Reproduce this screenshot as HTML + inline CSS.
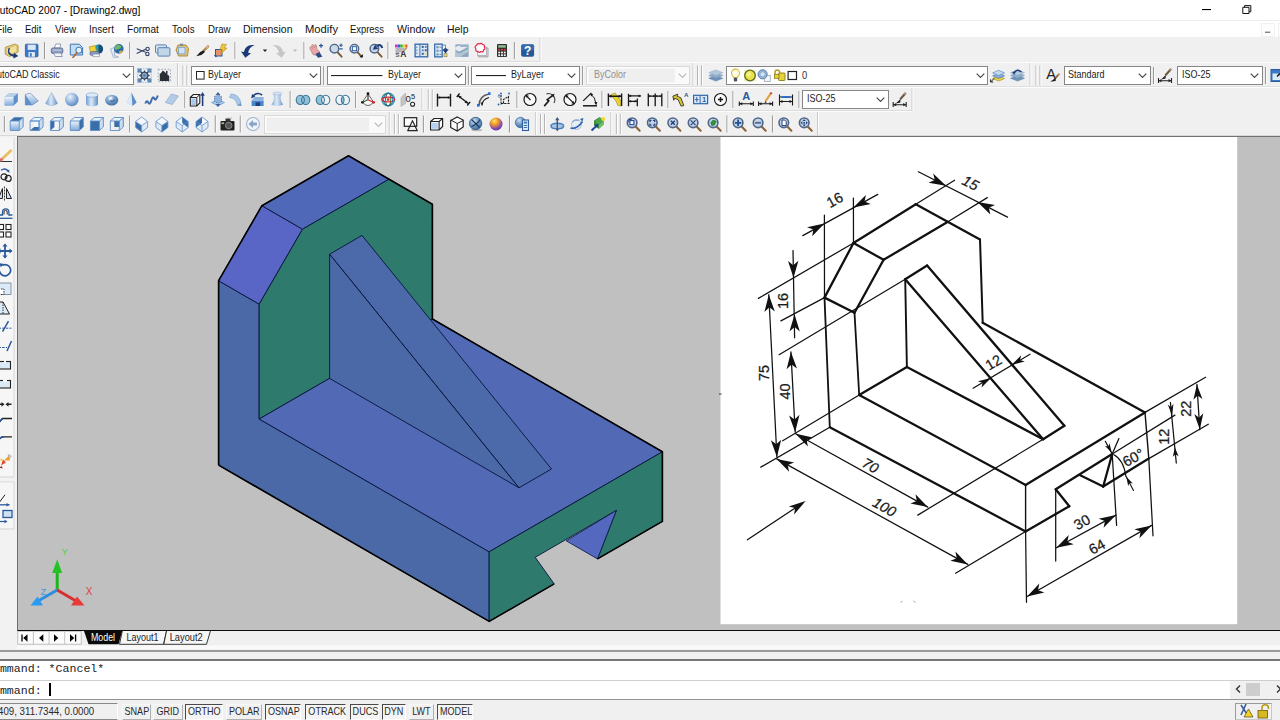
<!DOCTYPE html>
<html><head><meta charset="utf-8"><title>AutoCAD 2007 - [Drawing2.dwg]</title>
<style>
*{box-sizing:border-box;margin:0;padding:0}
html,body{width:1280px;height:720px;overflow:hidden;background:#f0f0f0;font-family:"Liberation Sans",sans-serif;font-size:12px;color:#000}
div,span,svg{position:absolute}
#title{left:0;top:0;width:1280px;height:20px;background:#fff}
#title span{left:-7px;top:5px;font-size:10.2px;line-height:12px;white-space:nowrap;color:#000}
#menu{left:0;top:20px;width:1280px;height:16.5px;z-index:2;background:#fff;border-top:1px solid #ededed}
#menu span{top:2.5px;font-size:10.2px;line-height:12px;white-space:nowrap;color:#111}
#tb{left:0;top:36px;width:1280px;height:101px;background:#f0f0f0}
.dd{height:19px;background:#fff;border:1px solid #868686;font-size:10.2px;line-height:16px;white-space:nowrap;overflow:hidden}
.dd.dis span{color:#909090}
.dd.dis{background:#efefef;border-color:#d9d9d9;box-shadow:inset 0 0 0 1.5px #fdfdfd}
.dd span{top:0;transform:scaleX(0.88);transform-origin:left center;color:#1c1c1c}
#canvas{left:16.5px;top:136.3px;width:1263.5px;height:495.2px;background:#c0c0c0;border-left:1.5px solid #6e6e6e;border-top:1.5px solid #727272;border-bottom:1.7px solid #0c0c0c}
#left{left:0;top:137px;width:17px;height:512px;background:#f2f2f2}
#tabs{left:17px;top:631px;width:1263px;height:18px;background:#f0f0f0}
#cmd{left:0;top:650px;width:1280px;height:50px;background:#fff;font-family:"Liberation Mono",monospace;font-size:11.6px}
#cmd span{white-space:nowrap;color:#222}
#status{left:0;top:699.2px;width:1280px;height:20.8px;background:#f0f0f0;font-size:10.2px;border-top:1.6px solid #939393}
#status i{display:inline-block;font-style:normal;transform:scaleX(0.89);transform-origin:center;white-space:nowrap}
#status span{top:3.5px;height:16.5px;line-height:14px;white-space:nowrap;text-align:center;color:#2a2a2a;overflow:visible}
#status span.on{border:1px solid #4a4a4a;border-right-color:#fff;border-bottom-color:#fff;background:#f4f4f4;line-height:14.6px}
#status span.off{border:1px solid #f8f8f8;border-right-color:#b0b0b0;border-bottom-color:#b0b0b0}
</style></head><body>
<div id="title"><span>AutoCAD 2007 - [Drawing2.dwg]</span>
<svg width="80" height="20" style="left:1200px;top:0" viewBox="1200 0 80 20"><rect x="1202" y="9" width="9" height="1.1" fill="#000"/><path d="M1242.8 7.3h6.2v6.2h-6.2z M1244.6 7.3v-1.7h6.2v6.2h-1.8" fill="none" stroke="#111" stroke-width="1"/></svg></div>
<div id="menu"><span style="left:-4px;transform:scaleX(1);transform-origin:left center">File</span><span style="left:25.3px;transform:scaleX(0.926);transform-origin:left center">Edit</span><span style="left:54.8px;transform:scaleX(0.968);transform-origin:left center">View</span><span style="left:88.5px;transform:scaleX(0.98);transform-origin:left center">Insert</span><span style="left:126.6px;transform:scaleX(0.988);transform-origin:left center">Format</span><span style="left:172.1px;transform:scaleX(0.95);transform-origin:left center">Tools</span><span style="left:207.8px;transform:scaleX(0.945);transform-origin:left center">Draw</span><span style="left:243px;transform:scaleX(1.029);transform-origin:left center">Dimension</span><span style="left:305px;transform:scaleX(1.1);transform-origin:left center">Modify</span><span style="left:350px;transform:scaleX(0.924);transform-origin:left center">Express</span><span style="left:396.5px;transform:scaleX(1.05);transform-origin:left center">Window</span><span style="left:446.5px;transform:scaleX(1.024);transform-origin:left center">Help</span><svg width="30" height="16" style="left:1255px;top:1px"><rect x="6.5" y="1.5" width="13" height="13" fill="#fdfdfd" stroke="#f0f0f0"/><rect x="10" y="9.6" width="5.2" height="1.3" fill="#777"/><rect x="23.5" y="1.5" width="13" height="13" fill="#fdfdfd" stroke="#f0f0f0"/></svg></div>
<div id="tb"><div class="dd " style="left:-12px;top:30px;width:146px"><span style="left:1.5px">AutoCAD Classic</span><svg width="9" height="6" style="right:2.5px;top:6.2px" viewBox="0 0 9 6"><path d="M0.7 0.7 L4.5 4.4 L8.3 0.7" fill="none" stroke="#444" stroke-width="1.15"/></svg></div><div class="dd " style="left:190.5px;top:30px;width:130.5px"><svg width="12" height="12" style="left:4.2px;top:4.2px"><rect x="0.5" y="0.5" width="7.6" height="7.6" fill="#fff" stroke="#222"/></svg><span style="left:16.9px">ByLayer</span><svg width="9" height="6" style="right:2.5px;top:6.2px" viewBox="0 0 9 6"><path d="M0.7 0.7 L4.5 4.4 L8.3 0.7" fill="none" stroke="#444" stroke-width="1.15"/></svg></div><div class="dd " style="left:327px;top:30px;width:139px"><svg width="60" height="3" style="left:3px;top:7.5px"><rect width="51.5" height="1.1" fill="#222"/></svg><span style="left:60px">ByLayer</span><svg width="9" height="6" style="right:2.5px;top:6.2px" viewBox="0 0 9 6"><path d="M0.7 0.7 L4.5 4.4 L8.3 0.7" fill="none" stroke="#444" stroke-width="1.15"/></svg></div><div class="dd " style="left:471.3px;top:30px;width:108.69999999999999px"><svg width="60" height="3" style="left:4px;top:7.5px"><rect width="30" height="1.1" fill="#222"/></svg><span style="left:38.5px">ByLayer</span><svg width="9" height="6" style="right:2.5px;top:6.2px" viewBox="0 0 9 6"><path d="M0.7 0.7 L4.5 4.4 L8.3 0.7" fill="none" stroke="#444" stroke-width="1.15"/></svg></div><div class="dd dis" style="left:586px;top:30px;width:104px"><div style="left:88px;top:0;width:16px;height:17px;background:#fafafa"></div><span style="left:7px">ByColor</span><svg width="9" height="6" style="right:2.5px;top:6.2px" viewBox="0 0 9 6"><path d="M0.7 0.7 L4.5 4.4 L8.3 0.7" fill="none" stroke="#b8b8b8" stroke-width="1.15"/></svg></div><div class="dd " style="left:726px;top:30px;width:262px"><span style="left:74.6px"><b style="font-weight:normal;font-size:10.6px;color:#333">0</b></span><svg width="9" height="6" style="right:2.5px;top:6.2px" viewBox="0 0 9 6"><path d="M0.7 0.7 L4.5 4.4 L8.3 0.7" fill="none" stroke="#444" stroke-width="1.15"/></svg></div><div class="dd " style="left:1064px;top:30px;width:86.5px"><span style="left:3px">Standard</span><svg width="9" height="6" style="right:2.5px;top:6.2px" viewBox="0 0 9 6"><path d="M0.7 0.7 L4.5 4.4 L8.3 0.7" fill="none" stroke="#444" stroke-width="1.15"/></svg></div><div class="dd " style="left:1176.5px;top:30px;width:86.0px"><span style="left:4px">ISO-25</span><svg width="9" height="6" style="right:2.5px;top:6.2px" viewBox="0 0 9 6"><path d="M0.7 0.7 L4.5 4.4 L8.3 0.7" fill="none" stroke="#444" stroke-width="1.15"/></svg></div><div class="dd " style="left:802px;top:54px;width:86.5px"><span style="left:3.6px">ISO-25</span><svg width="9" height="6" style="right:2.5px;top:6.2px" viewBox="0 0 9 6"><path d="M0.7 0.7 L4.5 4.4 L8.3 0.7" fill="none" stroke="#444" stroke-width="1.15"/></svg></div><div class="dd dis" style="left:264px;top:79px;width:122px"><div style="left:104px;top:0;width:17px;height:17px;background:#fafafa"></div><span style="left:5px"></span><svg width="9" height="6" style="right:2.5px;top:6.2px" viewBox="0 0 9 6"><path d="M0.7 0.7 L4.5 4.4 L8.3 0.7" fill="none" stroke="#b8b8b8" stroke-width="1.15"/></svg></div><svg width="1280" height="101" viewBox="0 36 1280 101" style="left:0;top:0"><defs>
<linearGradient id="gs" x1="0" y1="0" x2="1" y2="0"><stop offset="0" stop-color="#6f9fd4"/><stop offset="0.45" stop-color="#dce9f6"/><stop offset="1" stop-color="#5f8fc8"/></linearGradient>
<linearGradient id="gv" x1="0" y1="0" x2="0" y2="1"><stop offset="0" stop-color="#eef4fb"/><stop offset="1" stop-color="#7fa8d8"/></linearGradient>
<radialGradient id="gr" cx="0.38" cy="0.32" r="0.7"><stop offset="0" stop-color="#eaf2fb"/><stop offset="0.6" stop-color="#8fb2dc"/><stop offset="1" stop-color="#5f88c0"/></radialGradient>
<radialGradient id="go" cx="0.38" cy="0.28" r="0.8"><stop offset="0" stop-color="#ffe468"/><stop offset="0.35" stop-color="#f09a22"/><stop offset="0.72" stop-color="#8a4ab0"/><stop offset="1" stop-color="#4a2a98"/></radialGradient>
<radialGradient id="gr2" cx="0.38" cy="0.3" r="0.75"><stop offset="0" stop-color="#cfe0f0"/><stop offset="0.5" stop-color="#6f9ac8"/><stop offset="1" stop-color="#3f6a9c"/></radialGradient>
</defs><rect x="0" y="61" width="540" height="1" fill="#dcdcdc"/><rect x="0" y="62" width="1280" height="1" fill="#fcfcfc"/><rect x="0" y="86" width="1280" height="1" fill="#e0e0e0"/><rect x="0" y="87" width="1280" height="1" fill="#fcfcfc"/><rect x="0" y="110" width="912" height="1" fill="#dcdcdc"/><rect x="0" y="111" width="912" height="1" fill="#fcfcfc"/><rect x="0" y="135" width="1280" height="1" fill="#d8d8d8"/><g transform="translate(11.7 50.5)"><path d="M-6.5 -3.2l9.5-3.3l3.5 1.5v6.5l-8.5 4.7l-4.5-2.5z" fill="#dcc472" stroke="#a88e3c" stroke-width="0.7"/><path d="M-5 -1.2l9.5-3.5v5.5l-8 4.3z" fill="#f0e09a"/><path d="M-1.5 -2.2q-3 5 3.6 6.4v-1.9l4.6 3.3l-5 2.4v-1.8q-7.5-1.4-5-8.4z" fill="#1f3a70"/></g><g transform="translate(31.7 50.5)"><rect x="-6.3" y="-6.3" width="12.6" height="12.6" rx="1" fill="#3c78c4" stroke="#2a5a9c" stroke-width="0.8"/><rect x="-4" y="-5.8" width="8" height="5.2" fill="#d9e6f5"/><rect x="-3.2" y="1.6" width="6.4" height="4.6" fill="#e8eef6"/><rect x="-1.8" y="2.6" width="1.8" height="3.6" fill="#3c78c4"/></g><g transform="translate(57.3 50.5)"><path d="M-3 -2.5l1.5-4h5l-1 4z" fill="#fff" stroke="#7888aa" stroke-width="0.8"/><rect x="-6" y="-2.5" width="11.5" height="5.5" rx="1.5" fill="#8c9cc0" stroke="#56648c" stroke-width="0.8"/><path d="M-3.5 2.5h7l1.5 3.5h-7z" fill="#f4f6fa" stroke="#7888aa" stroke-width="0.8"/><rect x="-4.5" y="-1" width="8.5" height="1.2" fill="#c8d2e6"/></g><g transform="translate(76.6 50.5)"><path d="M-6.3 -6.3h9l3.3 3.3v7.5h-12.3z" fill="#c4dcf0" stroke="#3f76b4" stroke-width="1"/><circle cx="2.3" cy="-0.3" r="3" fill="#e4f0fa" stroke="#4a82c0" stroke-width="1.1"/><path d="M0.3 2.2l-3.8 4.6" stroke="#b06a3a" stroke-width="1.8" stroke-linecap="round"/></g><g transform="translate(96 50.5)"><circle cx="2.5" cy="-1.5" r="4.6" fill="#2a9ab0"/><path d="M2.5 -6a4.6 4.6 0 0 1 0 9.2z" fill="#1c4a78"/><rect x="-5.8" y="-5" width="6" height="6" fill="#f0d23c" stroke="#b89a20" stroke-width="0.7" transform="rotate(-12)"/><rect x="-6" y="1.2" width="9" height="3.6" rx="1.2" fill="#8c9cc0" stroke="#56648c" stroke-width="0.7"/><rect x="-3" y="3.6" width="6.4" height="2.6" fill="#f4f6fa" stroke="#8090b0" stroke-width="0.6"/></g><g transform="translate(117 50.5)"><path d="M-6.5 -1.5l4-1.5v8l4 1.5l-5 0.5z" fill="#e6ecf4" stroke="#98a8c4" stroke-width="0.8"/><circle cx="1.8" cy="-1.6" r="4.8" fill="#2c6aa8"/><path d="M-1.5 -4.5q3-2.5 6 0.5q-1 3-3.5 2.5q-2.5 2-3.5-0.5z" fill="#6ab86a"/><path d="M2 1q2-1.5 4-0.5q-1 2.5-3.5 2.7z" fill="#d8a83c"/></g><g transform="translate(143 50.5)"><path d="M-6.3 -1.8l9 3.6M-6.3 3l9.4-4.6" stroke="#34446c" stroke-width="1.15" fill="none"/><circle cx="4.6" cy="-1.6" r="1.7" fill="none" stroke="#34446c" stroke-width="1.1"/><circle cx="4.4" cy="3.4" r="1.7" fill="none" stroke="#34446c" stroke-width="1.1"/></g><g transform="translate(162.5 50.5)"><rect x="-7" y="-5.6" width="11" height="8" rx="1" fill="#d4e2ee" stroke="#5a82b4" stroke-width="1"/><rect x="-4.6" y="-2.8" width="12" height="8.4" rx="1" fill="#c2d6e8" stroke="#5a82b4" stroke-width="1"/></g><g transform="translate(182 50.5)"><path d="M-4 -5.5h8l2.5 3.5l-1 7.5h-9l-2.5-6z" fill="#e2c27a" stroke="#a8842c" stroke-width="0.9"/><rect x="-2.2" y="-6.8" width="3.4" height="2.2" fill="#8a8a8a"/><rect x="-3.6" y="-3.2" width="6.6" height="6.6" fill="#cfe2f4" stroke="#6a9acc" stroke-width="0.7"/></g><g transform="translate(202 50.5)"><path d="M6 -4.2l-5.2 5.4" stroke="#b48a56" stroke-width="2.4" stroke-linecap="round"/><path d="M6.2 -4.6l-2 2.2" stroke="#e0c08a" stroke-width="1.2"/><path d="M1.6 0l-3.4 1.6l-4 4.2l5.2-1.2l3.6-3.2z" fill="#1c1c1c"/></g><g transform="translate(221 50.5)"><rect x="-5.5" y="-1" width="6.5" height="6.5" fill="#e8926a" stroke="#2a5a9c" stroke-width="1"/><path d="M1 -6.5l4.5 0.5l-2.5 3.5h3l-6 6l1.5-4.5h-2.5z" fill="#f0c838" stroke="#b08a18" stroke-width="0.6"/><path d="M-6.5 4.5l2 2" stroke="#2a5a9c" stroke-width="1.4"/></g><g transform="translate(249 50.5)"><path d="M5.6 -5.2Q-3.5 -6.8 -5.4 2.2L-0.8 2.8Q-0.5 -3 5.6 -5.2z" fill="#1c3a78"/><path d="M-8 1.0L2 2.8L-3.6 7.2z" fill="#1c3a78"/></g><g transform="translate(278 50.5)"><path d="M-5.6 -5.2Q3.5 -6.8 5.4 2.2L0.8 2.8Q0.5 -3 -5.6 -5.2z" fill="#c6c6c6"/><path d="M8 1.0L-2 2.8L3.6 7.2z" fill="#c6c6c6"/></g><g transform="translate(316 50.5)"><path transform="rotate(-22 -1 0)" d="M-5 -3.5q0-2 1.6-1.6l0.8 2.4l0.4-3.4q1.4-1 1.8 0.4l0.2 2.8l1.2-2.4q1.4-0.2 1.2 1.2l-1 3.6l1.6 3l-3.4 3.4l-3.8-3z" fill="#e8a6a6" stroke="#b87878" stroke-width="0.6"/><path d="M-0.5 3.5l4 -2l2.8 4.8l-4.3 1z" fill="#2a4a8c"/><path d="M5 -6.8v4M3 -4.8h4" stroke="#2a5a9c" stroke-width="1.3"/></g><g transform="translate(336 50.5)"><path d="M1 1.2l4.6 5" stroke="#7a5a30" stroke-width="1.9" stroke-linecap="round"/><circle cx="-1.6" cy="-1.8" r="4.3" fill="#ccdae8" stroke="#4f6688" stroke-width="1.4"/><path d="M5 -7v3.4M3.3 -5.3h3.4M3.3 -1.6h3.4" stroke="#2a5a9c" stroke-width="1.1"/></g><g transform="translate(356 50.5)"><path d="M1 1.2l4.6 5" stroke="#7a5a30" stroke-width="1.9" stroke-linecap="round"/><circle cx="-1.6" cy="-1.8" r="4.3" fill="#ccdae8" stroke="#4f6688" stroke-width="1.4"/><rect x="-3.6" y="-3.8" width="4" height="4" fill="#fff" stroke="#2a5a9c" stroke-width="0.9"/><path d="M6.8 3.5v3.3h-3.3z" fill="#111"/></g><g transform="translate(376 50.5)"><path d="M1 1.2l4.6 5" stroke="#7a5a30" stroke-width="1.9" stroke-linecap="round"/><circle cx="-1.6" cy="-1.8" r="4.3" fill="#c8d6e6" stroke="#4f6688" stroke-width="1.4"/><path d="M6.2 -2.6Q5.2 -6.8 0.6 -4.6" stroke="#1f3f7a" stroke-width="2.2" fill="none"/><path d="M-3.2 -0.8L2.2 -1.6L-1 -5.9z" fill="#1f3f7a"/></g><g transform="translate(401 50.5)"><rect x="-6" y="-6" width="2.6" height="3" fill="#c83cb4"/><rect x="-3.4" y="-6" width="2.6" height="3" fill="#3c5ad2"/><rect x="-0.8" y="-6" width="2.6" height="3" fill="#3cb43c"/><rect x="1.8" y="-6" width="2.6" height="3" fill="#e6d23c"/><rect x="4.4" y="-6" width="2" height="3" fill="#e05a28"/><path d="M-5.5 -1.5h9M-5.5 0.5h7M-5.5 2.5h4" stroke="#7a7a8a" stroke-width="1.1"/><path d="M6 -3l-6 6" stroke="#c8906a" stroke-width="1.6"/><text x="2.2" y="6.8" font-family="Liberation Sans, sans-serif" font-size="8.5" font-weight="bold" fill="#333" text-anchor="middle">A</text><text x="-3.6" y="6.8" font-family="Liberation Sans, sans-serif" font-size="6" font-weight="bold" fill="#555" text-anchor="middle">S</text></g><g transform="translate(421.4 50.5)"><rect x="-6.3" y="-6.3" width="12.6" height="12.6" fill="#dce9f6" stroke="#2f66aa" stroke-width="1.3"/><path d="M-1.5 -6v12" stroke="#2f66aa" stroke-width="0.9"/><path d="M-4.6 -4v8" stroke="#4a7ab8" stroke-width="1" stroke-dasharray="1.4 1.6"/><rect x="0.3" y="-4.6" width="2" height="2" fill="#3a5a8c"/><rect x="3.4" y="-4.6" width="2" height="2" fill="#6a8ab8"/><rect x="0.3" y="-1.2" width="2" height="2" fill="#6a8ab8"/><rect x="3.4" y="-1.2" width="2" height="2" fill="#3a5a8c"/><rect x="0.3" y="2.3" width="2" height="2" fill="#3a5a8c"/><rect x="3.4" y="2.3" width="2" height="2" fill="#e8d870"/></g><g transform="translate(441 50.5)"><path d="M-6.3 -6.3h7.5v12.6h-7.5z" fill="#dce9f6" stroke="#2f66aa" stroke-width="1.2"/><rect x="-4.6" y="-4.4" width="2.2" height="2.2" fill="#7a94b8"/><rect x="-4.6" y="-0.8" width="2.2" height="2.2" fill="#7a94b8"/><rect x="-4.6" y="2.8" width="2.2" height="2.2" fill="#7a94b8"/><path d="M-1.5 -3.3h2M-1.5 0.3h2M-1.5 3.9h2" stroke="#5a7aa8" stroke-width="0.9"/><path d="M1.5 -5.5h3v3.5" fill="none" stroke="#6a8ab8" stroke-width="1"/><path d="M3.5 -2.5l3.2 4.2h-2v1h-2.4v-1h-2z" fill="#1f3f7a" transform="rotate(180 4 0.2)"/><rect x="3" y="3.2" width="3" height="3" fill="#e8d870" stroke="#7a7a5a" stroke-width="0.6"/></g><g transform="translate(462 50.5)"><rect x="-6.6" y="-6" width="13.2" height="12.4" fill="#8ea6bc"/><path d="M-6.6 -3.5l6-2.5h7.2v2l-9 5l-4.2-1.5z" fill="#e4ecf2"/><path d="M-6.6 1.5l4.5 1.5l8.7-5v3l-8.7 5.4h-4.5z" fill="#b4c6d6"/><path d="M-6.6 -6h13.2v2.5h-7z" fill="#9ab4cc"/></g><g transform="translate(481.5 50.5)"><path d="M-3 -2.5h9.5v8.8h-9.5z" fill="#e8e8ec" stroke="#8a8a92" stroke-width="0.8"/><path d="M-4 -3.5h9v8.5h-9z" fill="#f4f4f6" stroke="#9a9aa2" stroke-width="0.7"/><path d="M-5.5 -1.5q-2-2.5 0.5-3.5q0.5-2.5 3-1.5q2-1.5 3 0.5q2.5 0 1.8 2.5q1.5 2-0.8 3q0 2.5-2.5 1.5q-2 1.8-3.2-0.2q-2.8 0.2-1.8-2.3z" fill="#fff" stroke="#e02848" stroke-width="1.2"/></g><g transform="translate(502 50.5)"><rect x="-5" y="-6.6" width="10" height="13.2" rx="1" fill="#2c2c2c"/><rect x="-3.8" y="-5.4" width="7.6" height="2.6" fill="#8ab88a"/><rect x="-3.8" y="-1.6" width="1.9" height="1.8" fill="#d83c3c"/><rect x="-1.0" y="-1.6" width="1.9" height="1.8" fill="#d83c3c"/><rect x="1.7999999999999998" y="-1.6" width="1.9" height="1.8" fill="#d83c3c"/><rect x="-3.8" y="1.1" width="1.9" height="1.8" fill="#f0f0f0"/><rect x="-1.0" y="1.1" width="1.9" height="1.8" fill="#f0f0f0"/><rect x="1.7999999999999998" y="1.1" width="1.9" height="1.8" fill="#f0f0f0"/><rect x="-3.8" y="3.8000000000000003" width="1.9" height="1.8" fill="#f0f0f0"/><rect x="-1.0" y="3.8000000000000003" width="1.9" height="1.8" fill="#f0f0f0"/><rect x="1.7999999999999998" y="3.8000000000000003" width="1.9" height="1.8" fill="#f0f0f0"/></g><g transform="translate(527.6 50.5)"><rect x="-6.5" y="-6.3" width="13" height="12.6" rx="2" fill="#275796"/><rect x="-6.5" y="-6.3" width="13" height="6" rx="2" fill="#3f78bc" opacity="0.6"/><text x="0" y="4.6" font-family="Liberation Sans, sans-serif" font-size="12" font-weight="bold" fill="#fff" text-anchor="middle">?</text></g><g transform="translate(265 50.5)"><path d="M-2.2 -1h4.4l-2.2 2.4z" fill="#222"/></g><g transform="translate(295 50.5)"><path d="M-2.2 -1h4.4l-2.2 2.4z" fill="#bdbdbd"/></g><rect x="43.95" y="42.0" width="1.1" height="17" fill="#999"/><rect x="45.05" y="42.0" width="0.8" height="17" fill="#fcfcfc"/><rect x="129.14999999999998" y="42.0" width="1.1" height="17" fill="#999"/><rect x="130.25" y="42.0" width="0.8" height="17" fill="#fcfcfc"/><rect x="234.45" y="42.0" width="1.1" height="17" fill="#999"/><rect x="235.55" y="42.0" width="0.8" height="17" fill="#fcfcfc"/><rect x="303.45" y="42.0" width="1.1" height="17" fill="#999"/><rect x="304.55" y="42.0" width="0.8" height="17" fill="#fcfcfc"/><rect x="387.45" y="42.0" width="1.1" height="17" fill="#999"/><rect x="388.55" y="42.0" width="0.8" height="17" fill="#fcfcfc"/><rect x="513.85" y="42.0" width="1.1" height="17" fill="#999"/><rect x="514.9499999999999" y="42.0" width="0.8" height="17" fill="#fcfcfc"/><rect x="539.5" y="38" width="1" height="23" fill="#c9c9c9"/><rect x="540.5" y="38" width="1" height="23" fill="#fbfbfb"/><rect x="323.15" y="66.0" width="1.1" height="19" fill="#999"/><rect x="324.25" y="66.0" width="0.8" height="19" fill="#fcfcfc"/><rect x="467.84999999999997" y="66.0" width="1.1" height="19" fill="#999"/><rect x="468.95" y="66.0" width="0.8" height="19" fill="#fcfcfc"/><rect x="582.0500000000001" y="66.0" width="1.1" height="19" fill="#999"/><rect x="583.15" y="66.0" width="0.8" height="19" fill="#fcfcfc"/><g transform="translate(144.5 75.5)"><rect x="-8" y="-8.2" width="16" height="16.4" fill="#e8f1fa"/><rect x="-6.9" y="-6.9" width="4" height="4" fill="#5f86ae"/><rect x="2.9" y="-6.9" width="4" height="4" fill="#5f86ae"/><rect x="-6.9" y="2.9" width="4" height="4" fill="#5f86ae"/><rect x="2.9" y="2.9" width="4" height="4" fill="#5f86ae"/><rect x="-6.9" y="-6.9" width="13.8" height="13.8" fill="none" stroke="#7f9ebe" stroke-width="0.6" stroke-dasharray="1.5 1.2"/><polygon points="0.00,-5.60 1.38,-3.33 3.96,-3.96 3.33,-1.38 5.60,-0.00 3.33,1.38 3.96,3.96 1.38,3.33 0.00,5.60 -1.38,3.33 -3.96,3.96 -3.33,1.38 -5.60,0.00 -3.33,-1.38 -3.96,-3.96 -1.38,-3.33" fill="#3c4652"/><circle r="2.7" fill="#86a2c6"/><circle r="1.3" fill="#5a7eae"/></g><g transform="translate(164.4 75.5)"><rect x="-6.2" y="-6.2" width="12.4" height="12.4" fill="none" stroke="#8896a6" stroke-width="0.8" stroke-dasharray="1.6 1.6"/><path d="M-4.6 5.4v-6.6l3.2-3.8l6.2 5.4v5z" fill="#2a2e36"/><rect x="1.6" y="-4.6" width="1.5" height="3" fill="#2a2e36"/></g><rect x="177.0" y="63" width="1" height="23" fill="#c9c9c9"/><rect x="178.0" y="63" width="1" height="23" fill="#fbfbfb"/><rect x="182.5" y="65.5" width="1" height="20" fill="#b4b4b4"/><rect x="183.5" y="65.5" width="1" height="20" fill="#fff"/><rect x="186.5" y="65.5" width="1" height="20" fill="#b4b4b4"/><rect x="187.5" y="65.5" width="1" height="20" fill="#fff"/><rect x="692.5" y="63" width="1" height="23" fill="#c9c9c9"/><rect x="693.5" y="63" width="1" height="23" fill="#fbfbfb"/><rect x="697.0" y="65.5" width="1" height="20" fill="#b4b4b4"/><rect x="698.0" y="65.5" width="1" height="20" fill="#fff"/><rect x="701.0" y="65.5" width="1" height="20" fill="#b4b4b4"/><rect x="702.0" y="65.5" width="1" height="20" fill="#fff"/><g transform="translate(715.8 75.5)"><path d="M-7 2.8l7-2.8l7 2.8l-7 2.8z" fill="#6f93b8" stroke="#5a7ea4" stroke-width="0.5"/><path d="M-7 0l7-2.8l7 2.8l-7 2.8z" fill="#8dacc8" stroke="#6a8eb4" stroke-width="0.5"/><path d="M-7 -2.8l7-2.8l7 2.8l-7 2.8z" fill="#b4c8dc" stroke="#86a4c2" stroke-width="0.5"/></g><g transform="translate(735.5 75.5)"><path d="M-1.8 2q-2.4-2.4-2.2-4.4a4 4 0 0 1 8 0q0.2 2-2.2 4.4z" fill="#fffde8" stroke="#d4bc30" stroke-width="1.1"/><rect x="-1.7" y="2.3" width="3.4" height="3.6" rx="0.8" fill="#4a5266"/></g><g transform="translate(750 75.5)"><rect x="-5.8" y="-5.8" width="11.6" height="11.6" fill="#e6ee9a" opacity="0.7"/><circle r="5.3" fill="#ece244" stroke="#5a6a2a" stroke-width="1.3"/><circle cx="-1.2" cy="-1.2" r="2.2" fill="#f6f08a"/></g><g transform="translate(763.8 75.5)"><rect x="0.5" y="0" width="6" height="6" fill="#f2f4f8" stroke="#9aa6b8" stroke-width="0.8"/><circle cx="-1.2" cy="-1.2" r="4.6" fill="#8fb2d4" stroke="#5a7a9e" stroke-width="0.9"/><circle cx="-1.2" cy="-1.2" r="2" fill="#d4e4f2"/></g><g transform="translate(780 75.5)"><path d="M-5 -1v-2.2a2.3 2.3 0 0 1 4.6 0v1" fill="none" stroke="#b8a020" stroke-width="1.5"/><rect x="-1.5" y="-2.5" width="6.5" height="7.5" rx="0.8" fill="#e6d23c" stroke="#8a7a18" stroke-width="0.9"/><rect x="-5.5" y="-1.2" width="4.5" height="4" fill="#e6d23c" stroke="#8a7a18" stroke-width="0.8"/></g><g transform="translate(792.3 75.5)"><rect x="-4.2" y="-4" width="8.4" height="8" fill="#fff" stroke="#222" stroke-width="1.2"/></g><g transform="translate(997.6 75.5)"><path d="M-5 3l6-2.6l6 2.6l-6 2.6z" fill="#e6d23c" stroke="#9a8a20" stroke-width="0.6"/><path d="M-5 0.3l6-2.6l6 2.6l-6 2.6z" fill="#8ab0dc" stroke="#3f6fae" stroke-width="0.6"/><path d="M-5 -2.6l6-2.6l6 2.6l-6 2.6z" fill="#c4daf0" stroke="#4f7fbe" stroke-width="0.6"/><path d="M-7 6.5l3.5-3.5M-7 6.5v-2.6M-7 6.5h2.6" stroke="#222" stroke-width="1" fill="none"/></g><g transform="translate(1017.5 75.5)"><path d="M-7 2.8l7-2.8l7 2.8l-7 2.8z" fill="#6f93b8" stroke="#5a7ea4" stroke-width="0.5"/><path d="M-7 0l7-2.8l7 2.8l-7 2.8z" fill="#8dacc8" stroke="#6a8eb4" stroke-width="0.5"/><path d="M-7 -2.8l7-2.8l7 2.8l-7 2.8z" fill="#b4c8dc" stroke="#86a4c2" stroke-width="0.5"/><path d="M-3.5 -2.5q3-5 7.5-1" fill="none" stroke="#1f3f7a" stroke-width="1.5"/><path d="M-5.5 -3.5l3.6-0.4l-1.2 3.2z" fill="#1f3f7a"/></g><rect x="1029.5" y="63" width="1" height="23" fill="#c9c9c9"/><rect x="1030.5" y="63" width="1" height="23" fill="#fbfbfb"/><rect x="1035.5" y="65.5" width="1" height="20" fill="#b4b4b4"/><rect x="1036.5" y="65.5" width="1" height="20" fill="#fff"/><rect x="1039.5" y="65.5" width="1" height="20" fill="#b4b4b4"/><rect x="1040.5" y="65.5" width="1" height="20" fill="#fff"/><g transform="translate(1052.6 75.5)"><text x="-1.6" y="3.6" font-family="Liberation Sans, sans-serif" font-size="14.5" fill="#222" text-anchor="middle">A</text><path d="M6.6 -1.6l-3.8 4.2" stroke="#8a6a48" stroke-width="2"/><path d="M6.8 -1.9l-1.4 1.6" stroke="#c8a070" stroke-width="1.5"/><path d="M3.2 2.2l-5.6 4l5.4-0.8z" fill="#1c1c1c"/></g><rect x="1152.95" y="67.0" width="1.1" height="17" fill="#999"/><rect x="1154.05" y="67.0" width="0.8" height="17" fill="#fcfcfc"/><g transform="translate(1165 75.5)"><path d="M-7 5.2h14M-6.5 2.5v5M6.5 2.5v5" stroke="#222" stroke-width="1.1" fill="none"/><path d="M-6.5 5.2l3-1.6v3.2zM6.5 5.2l-3-1.6v3.2z" fill="#222"/><path d="M6 -6.5l-5.6 6.4" stroke="#6a5844" stroke-width="2.2"/><path d="M6.2 -6.8l-1.6 1.8" stroke="#b89a70" stroke-width="1.6"/><path d="M0.8 -0.4l-4.8 4.4l4.6-1z" fill="#1c1c1c"/></g><rect x="1264.95" y="67.0" width="1.1" height="17" fill="#999"/><rect x="1266.05" y="67.0" width="0.8" height="17" fill="#fcfcfc"/><g transform="translate(1277 75.5)"><rect x="-6" y="-6" width="12" height="12" fill="#3c78c4" stroke="#2a5a9c" stroke-width="1"/><rect x="-4.5" y="-2" width="9" height="6.5" fill="#dce9f6"/><path d="M6 -5l-6 6" stroke="#222" stroke-width="1.6"/></g><g transform="translate(11.2 99.5)"><path d="M-6.5 -2.5l4-3.5h9v8l-4 4h-9z" fill="#8fb2dc"/><path d="M-6.5 -2.5l4-3.5h9l-4 3.5z" fill="#b8d0ea"/><rect x="-6.5" y="-2.5" width="9" height="8.5" fill="url(#gv)"/><path d="M2.5 -2.5l4-3.5v8l-4 4z" fill="#5f8fc8"/></g><g transform="translate(31.8 99.5)"><path d="M-6.5 -5v10.5h7l6-4l-8-8z" fill="#a9c8ea"/><path d="M-6.5 -5v10.5h7z" fill="#5f8fc8"/><path d="M-6.5 -5l5-1.5l8 8l-6 4z" fill="url(#gv)"/><path d="M-6.5 -5l5-1.5l8 8l-6 4h-7z" fill="none" stroke="#5f86b8" stroke-width="0.6"/></g><g transform="translate(51.6 99.5)"><path d="M0 -7l6 11q-6 4-12 0z" fill="url(#gs)" stroke="#7fa0c8" stroke-width="0.5"/></g><g transform="translate(71.8 99.5)"><circle r="6.8" fill="url(#gr)"/></g><g transform="translate(92 99.5)"><path d="M-6 -4.5v9a6 2.3 0 0 0 12 0v-9z" fill="url(#gs)"/><ellipse cx="0" cy="-4.5" rx="6" ry="2.2" fill="#dce9f6" stroke="#7fa0c8" stroke-width="0.6"/></g><g transform="translate(111.7 99.5)"><ellipse cx="0" cy="0.6" rx="6.6" ry="5.4" fill="url(#gr2)"/><path d="M-2.6 -0.6q1.2-2.6 4.2-1.4q-2.4 0.4-2 2.8q-1.6 0.6-2.2-1.4z" fill="#eef4fa"/><path d="M-1.8 1.2q2.4 1.8 5-0.8" stroke="#2f5a8e" stroke-width="1" fill="none"/></g><g transform="translate(131.5 99.5)"><path d="M0 -7l5 10l-4 3.5l-6-3.5z" fill="#a9c8ea"/><path d="M0 -7l1 13.5l-6-3.5z" fill="#dce9f6"/><path d="M0 -7l5 10l-4 3.5z" fill="#5f8fc8"/></g><g transform="translate(151.3 99.5)"><path d="M-6 4q1.5-4 3 -1t3-2t3-2t3.5-3" fill="none" stroke="#3f6fae" stroke-width="2"/></g><g transform="translate(171.9 99.5)"><path d="M-6.5 3l6-8.5l7 2l-6 8.5z" fill="#b4cce8" stroke="#8aa8d0" stroke-width="0.7"/></g><g transform="translate(196.8 99.5)"><path d="M-6.5 -2l3-3h6.5v8.5l-3 3h-6.5z" fill="#f4f8fc" stroke="#222" stroke-width="1.1"/><path d="M-6.5 -2h6.5v8.5M0 -2l3-3" fill="none" stroke="#222" stroke-width="1"/><rect x="-5.5" y="-1" width="4.5" height="6.5" fill="#a9c8ea"/><path d="M5.8 6.5v-11" stroke="#1f3f7a" stroke-width="1.6"/><path d="M5.8 -7.5l2.2 3.8h-4.4z" fill="#1f3f7a"/></g><g transform="translate(218 99.5)"><path d="M-6.5 3l6.5-3l6.5 3l-6.5 3.5z" fill="#a9c8ea" stroke="#5f86b8" stroke-width="0.6"/><path d="M-3.5 -3l3.5-1.6l3.5 1.6v5l-3.5 1.8l-3.5-1.8z" fill="#8fb2dc" stroke="#3f6fae" stroke-width="0.7" stroke-dasharray="1.5 1"/><path d="M0 -7.5l2.4 3h-4.8zM0 7.5l2.4-3h-4.8z" fill="#3f5f9a"/></g><g transform="translate(237 99.5)"><path d="M-6 -5.5q8 0 10 9l-3.5 2.5q-1.5-7.5-8-8z" fill="#a9c8ea" stroke="#7fa0cc" stroke-width="0.6"/><path d="M4 3.5l-3.5 2.5l4 0.5z" fill="#5f8fc8"/></g><g transform="translate(257.6 99.5)"><path d="M-6 1h12v5.5h-12z" fill="#4a86cc"/><path d="M-6 1l3-3.5h9v5.5l0 0v-2z" fill="#8fb2dc"/><rect x="-2" y="2.8" width="4.5" height="3.7" fill="#1f3f7a"/><path d="M-4.5 -3.5q4-4.5 9-1" fill="none" stroke="#1f3f7a" stroke-width="1.6"/><path d="M-6.5 -1l1-4.5l3.2 2.6z" fill="#1f3f7a"/></g><g transform="translate(277.3 99.5)"><path d="M-4.5 -6.5h9q-3 6 1.5 11.5q-6 3-12 0q4.5-5.5 1.5-11.5z" fill="url(#gs)" opacity="0.9"/><ellipse cx="0" cy="-6" rx="4.5" ry="1.3" fill="#dce9f6" stroke="#8aa8d0" stroke-width="0.5"/></g><g transform="translate(303 99.5)"><g transform="translate(0 0.4)"><ellipse cx="-2.7" cy="0" rx="4.1" ry="4.6" fill="#92c2da"/><ellipse cx="2.7" cy="0" rx="4.1" ry="4.6" fill="#92c2da"/><path d="M0 -3.5a4.1 4.6 0 0 1 0 7a4.1 4.6 0 0 1 0-7z" fill="#92c2da"/><ellipse cx="-2.7" cy="0" rx="4.1" ry="4.6" fill="none" stroke="#3a7494" stroke-width="1.05"/><ellipse cx="2.7" cy="0" rx="4.1" ry="4.6" fill="none" stroke="#3a7494" stroke-width="1.05"/></g></g><g transform="translate(323 99.5)"><g transform="translate(0 0.4)"><ellipse cx="-2.7" cy="0" rx="4.1" ry="4.6" fill="#92c2da"/><ellipse cx="2.7" cy="0" rx="4.1" ry="4.6" fill="#eef3f8"/><path d="M0 -3.5a4.1 4.6 0 0 1 0 7a4.1 4.6 0 0 1 0-7z" fill="#eef3f8"/><ellipse cx="-2.7" cy="0" rx="4.1" ry="4.6" fill="none" stroke="#3a7494" stroke-width="1.05"/><ellipse cx="2.7" cy="0" rx="4.1" ry="4.6" fill="none" stroke="#3a7494" stroke-width="1.05"/></g></g><g transform="translate(342.7 99.5)"><g transform="translate(0 0.4)"><ellipse cx="-2.7" cy="0" rx="4.1" ry="4.6" fill="#eef3f8"/><ellipse cx="2.7" cy="0" rx="4.1" ry="4.6" fill="#eef3f8"/><path d="M0 -3.5a4.1 4.6 0 0 1 0 7a4.1 4.6 0 0 1 0-7z" fill="#92c2da"/><ellipse cx="-2.7" cy="0" rx="4.1" ry="4.6" fill="none" stroke="#3a7494" stroke-width="1.05"/><ellipse cx="2.7" cy="0" rx="4.1" ry="4.6" fill="none" stroke="#3a7494" stroke-width="1.05"/></g></g><g transform="translate(368 99.5)"><path d="M0 -5.6l-5.6 8.2q5.6 7 11.2 0z" fill="#f8f8f8" stroke="#555" stroke-width="0.9"/><path d="M0 0.2v-5.4" stroke="#222" stroke-width="1.1"/><path d="M0 0.2l-5.4 2.6" stroke="#2a6a3a" stroke-width="1.1"/><path d="M0 0.2l5.4 2.6" stroke="#c82828" stroke-width="1.1"/><circle cx="0" cy="-5.8" r="1.4" fill="#111"/><circle cx="-5.6" cy="2.8" r="1.4" fill="#1c2c1c"/><circle cx="5.6" cy="2.8" r="1.4" fill="#d02424"/></g><g transform="translate(388.2 99.5)"><circle r="6.3" fill="#fff" stroke="#2a9ab0" stroke-width="1.3"/><ellipse rx="2.6" ry="6.3" fill="none" stroke="#3a7a3a" stroke-width="1.1"/><ellipse rx="6.3" ry="2.4" fill="none" stroke="#d82828" stroke-width="1.1"/><ellipse rx="4.6" ry="6.3" fill="none" stroke="#2a5ab0" stroke-width="1"/><rect x="-1.2" y="-1.2" width="2.4" height="2.4" fill="#d82828"/></g><g transform="translate(408 99.5)"><path d="M-7 -2l4.5-4.5v10.5l-4.5 3z" fill="#c4c4c4" stroke="#a0a0a0" stroke-width="0.5"/><text x="-2.6" y="2.2" font-family="Liberation Sans, sans-serif" font-size="9.5" fill="#222">0</text><text x="3" y="-0.5" font-family="Liberation Sans, sans-serif" font-size="7.5" fill="#222">5</text><circle cx="4.6" cy="4.8" r="2" fill="#fff" stroke="#222" stroke-width="1.1"/></g><g transform="translate(444 99.5)"><path d="M-6.5 -5.8v12.8M6.5 -5.8v12.8M-6.5 -2h13" stroke="#1a1a1a" stroke-width="1.4" fill="none"/><path d="M-6.5 -2l2.6-1.3v2.6zM6.5 -2l-2.6-1.3v2.6z" fill="#1a1a1a"/></g><g transform="translate(463.8 99.5)"><path d="M-6 -4l10.5 8" stroke="#1a1a1a" stroke-width="1.4"/><path d="M-7 -2.5l2.8-3.6M3.5 6l2.8-3.6" stroke="#1a1a1a" stroke-width="1.4"/><path d="M-6 -4l3.8 0.8l-1.8 2.3zM4.5 4l-3.8-0.8l1.8-2.3z" fill="#1a1a1a"/></g><g transform="translate(484 99.5)"><path d="M-5 6q0-9.5 10-11.5" fill="none" stroke="#5a5a5a" stroke-width="1.6"/><path d="M-2 6q0-6 7-8" fill="none" stroke="#1a1a1a" stroke-width="1.1"/><rect x="-7" y="4.5" width="2.6" height="2.6" fill="#2a6ad0"/><rect x="4" y="-7.2" width="2.6" height="2.6" fill="#2a6ad0"/><path d="M-2 6l-1.4-3h2.8z" fill="#1a1a1a"/></g><g transform="translate(504.5 99.5)"><path d="M-3.5 -4.5v10M-3.5 4h9M-1 4v-4l5-3v7" fill="none" stroke="#1a1a1a" stroke-width="1.1" stroke-dasharray="2.2 1"/><path d="M-6.5 -3l1.2-2l1.2 2M-5.3 -3v1.5" stroke="#2a5ab0" stroke-width="0.8" fill="none"/><circle cx="-3.5" cy="-6" r="0.9" fill="#2a5ab0"/><circle cx="4.5" cy="-6" r="0.9" fill="#2a5ab0"/><circle cx="-6" cy="5" r="0.9" fill="#2a5ab0"/></g><g transform="translate(530 99.5)"><circle r="6" fill="#fafafa" stroke="#1a1a1a" stroke-width="1.2"/><path d="M0.5 0.5l-4-4.2" stroke="#1a1a1a" stroke-width="1.2"/><path d="M-4.3 -4.5l3.2 0.8l-2.2 2.2z" fill="#1a1a1a"/></g><g transform="translate(550 99.5)"><path d="M-3.5 -5.6a6.4 6.4 0 0 1 7.5 9.2" fill="none" stroke="#444" stroke-width="1.1"/><path d="M-5.8 6.6l4.6-5.2l-1.6-1.2l5.6-4.4" fill="none" stroke="#1a1a1a" stroke-width="1.6"/><path d="M4.6 -5.8l-1.2 3.6l-2.4-2.6z" fill="#1a1a1a"/></g><g transform="translate(570 99.5)"><circle r="6" fill="#fafafa" stroke="#1a1a1a" stroke-width="1.2"/><path d="M-4.2 -4.2l8.4 8.4" stroke="#1a1a1a" stroke-width="1.2"/><path d="M-4.5 -4.5l3.2 0.8l-2.2 2.2zM4.5 4.5l-3.2-0.8l2.2-2.2z" fill="#1a1a1a"/></g><g transform="translate(590 99.5)"><path d="M-7 6.3h14" stroke="#1a1a1a" stroke-width="1.5"/><path d="M-6.8 1.4l8.2-8" stroke="#1a1a1a" stroke-width="1.3"/><path d="M0.8 -5.4q4.6 3 5.2 10" fill="none" stroke="#1a1a1a" stroke-width="1"/><path d="M6.2 5.8l-2-3l3.2-0.2zM-0.2 -6l3.4 0.4l-1.8 2.6z" fill="#1a1a1a"/></g><g transform="translate(615 99.5)"><path d="M-4.5 -4.6l4.6-2l6 8.2v5l-3.4-0.8l-1.6-4z" fill="#e8d030" stroke="#8a7a18" stroke-width="0.5"/><path d="M-6.6 -6v12.4M6.6 -6v12.4M-6.6 -3.3h13.2" stroke="#1a1a1a" stroke-width="1.4" fill="none"/><path d="M-6.6 -3.3l3-1.5v3zM6.6 -3.3l-3-1.5v3z" fill="#1a1a1a"/></g><g transform="translate(634.5 99.5)"><path d="M-6 -5.8v12.6M2.8 -1v7.8M-6 -3.6h12.4M-6 1.8h8.8" stroke="#1a1a1a" stroke-width="1.3" fill="none"/><path d="M6.8 -3.6l-2.8-1.4v2.8zM-6 -3.6l2.6-1.3v2.6zM-6 1.8l2.6-1.3v2.6zM2.8 1.8l-2.6-1.3v2.6z" fill="#1a1a1a"/></g><g transform="translate(654.8 99.5)"><path d="M-6.5 -6v12.8M0.4 -6v12.8M7 -6v12.8M-6.5 -3.4h13.5" stroke="#1a1a1a" stroke-width="1.35" fill="none"/><path d="M-6.5 -3.4l2.2-1.2v2.4zM0.4 -3.4l-2.2-1.2v2.4zM0.4 -3.4l2.2-1.2v2.4zM7 -3.4l-2.2-1.2v2.4z" fill="#1a1a1a"/></g><g transform="translate(680.3 99.5)"><path d="M-7.4 -3.4l5-2l-0.9 2.1l3.8 1.5l3 7.8l-2.7 0.7l-3-6.6l-3.5-1.3l-0.9 2z" fill="#d6c62a" stroke="#222" stroke-width="0.8" stroke-linejoin="round"/><text x="3.6" y="-2.2" font-family="Liberation Sans, sans-serif" font-size="6.2" font-weight="bold" fill="#2a5a9c">A</text></g><g transform="translate(700.6 99.5)"><rect x="-7" y="-4.2" width="14" height="8.4" fill="#dce9f6" stroke="#2f66aa" stroke-width="1.2"/><path d="M-0.5 -4v8" stroke="#2f66aa" stroke-width="1"/><path d="M-3.8 -2.6v5.2M-5.5 0h3.4" stroke="#2f66aa" stroke-width="1"/><text x="3.4" y="2.9" font-family="Liberation Sans, sans-serif" font-size="7.5" font-weight="bold" fill="#2f66aa" text-anchor="middle">1</text></g><g transform="translate(720.5 99.5)"><circle r="6" fill="#fdfdfd" stroke="#1a1a1a" stroke-width="1.1"/><path d="M-2.6 0h5.2M0 -2.6v5.2" stroke="#1a1a1a" stroke-width="1.5"/></g><g transform="translate(746.3 99.5)"><text x="0" y="0.5" font-family="Liberation Sans, sans-serif" font-size="11" font-weight="bold" fill="#2a5a9c" text-anchor="middle">A</text><path d="M-7 4.2h14M-7 2v4.5M7 2v4.5" stroke="#1a1a1a" stroke-width="1.1"/><path d="M-7 4.2l3-1.5v3zM7 4.2l-3-1.5v3z" fill="#1a1a1a"/></g><g transform="translate(765.6 99.5)"><path d="M-7 4.2h14M-7 2v4.5M7 2v4.5" stroke="#1a1a1a" stroke-width="1.1"/><path d="M-7 4.2l3-1.5v3zM7 4.2l-3-1.5v3z" fill="#1a1a1a"/><path d="M5.5 -6.5l-5.5 8" stroke="#e0a040" stroke-width="2.2"/><path d="M6 -7l-1 1.5" stroke="#d04040" stroke-width="2.2"/><path d="M0 1.5l-1.5 2.5l2.6-1.2z" fill="#222"/></g><g transform="translate(786 99.5)"><path d="M-6.5 -5v11M6.5 -5v11M-6.5 2h13M-6.5 -2.5h13" stroke="#1a1a1a" stroke-width="1.1"/><path d="M-6.5 2l3-1.5v3zM6.5 2l-3-1.5v3z" fill="#1a1a1a"/><rect x="-4.5" y="-3.3" width="9" height="1.8" fill="#2a6ad0"/></g><g transform="translate(899.7 99.5)"><path d="M-7 5.2h14M-6.5 2.5v5M6.5 2.5v5" stroke="#222" stroke-width="1.1" fill="none"/><path d="M-6.5 5.2l3-1.6v3.2zM6.5 5.2l-3-1.6v3.2z" fill="#222"/><path d="M6 -6.5l-5.6 6.4" stroke="#6a5844" stroke-width="2.2"/><path d="M6.2 -6.8l-1.6 1.8" stroke="#b89a70" stroke-width="1.6"/><path d="M0.8 -0.4l-4.8 4.4l4.6-1z" fill="#1c1c1c"/></g><rect x="184.25" y="91.0" width="1.1" height="17" fill="#999"/><rect x="185.35000000000002" y="91.0" width="0.8" height="17" fill="#fcfcfc"/><rect x="289.65" y="91.0" width="1.1" height="17" fill="#999"/><rect x="290.75" y="91.0" width="0.8" height="17" fill="#fcfcfc"/><rect x="355.05" y="91.0" width="1.1" height="17" fill="#999"/><rect x="356.15000000000003" y="91.0" width="0.8" height="17" fill="#fcfcfc"/><rect x="516.45" y="91.0" width="1.1" height="17" fill="#999"/><rect x="517.55" y="91.0" width="0.8" height="17" fill="#fcfcfc"/><rect x="601.45" y="91.0" width="1.1" height="17" fill="#999"/><rect x="602.55" y="91.0" width="0.8" height="17" fill="#fcfcfc"/><rect x="667.45" y="91.0" width="1.1" height="17" fill="#999"/><rect x="668.55" y="91.0" width="0.8" height="17" fill="#fcfcfc"/><rect x="732.45" y="91.0" width="1.1" height="17" fill="#999"/><rect x="733.55" y="91.0" width="0.8" height="17" fill="#fcfcfc"/><rect x="798.45" y="91.0" width="1.1" height="17" fill="#999"/><rect x="799.55" y="91.0" width="0.8" height="17" fill="#fcfcfc"/><rect x="421.5" y="88" width="1" height="22" fill="#c9c9c9"/><rect x="422.5" y="88" width="1" height="22" fill="#fbfbfb"/><rect x="427.8" y="89.5" width="1" height="20" fill="#b4b4b4"/><rect x="428.8" y="89.5" width="1" height="20" fill="#fff"/><rect x="431.8" y="89.5" width="1" height="20" fill="#b4b4b4"/><rect x="432.8" y="89.5" width="1" height="20" fill="#fff"/><rect x="911.5" y="88" width="1" height="23" fill="#c9c9c9"/><rect x="912.5" y="88" width="1" height="23" fill="#fbfbfb"/><g transform="translate(16.7 124)"><rect x="-2.5" y="-6.5" width="9" height="9.5" fill="#f4f8fc"/><path d="M-6.5 -3l4-3.5h9l-4 3.5z" fill="#3a6ea8"/><path d="M2.5 -3l4-3.5v9.5l-4 3.5z" fill="#c9dcf0"/><rect x="-6.5" y="-3" width="9" height="9.5" fill="url(#gv)"/><path d="M-6.5 -3h9v9.5h-9zM-6.5 -3l4-3.5h9v9.5l-4 3.5M2.5 -3l4-3.5" fill="none" stroke="#5f8fc8" stroke-width="0.9"/></g><g transform="translate(36.6 124)"><rect x="-2.5" y="-6.5" width="9" height="9.5" fill="#f4f8fc"/><path d="M-6.5 6.5l4-3.5h9l-4 3.5z" fill="#3a6ea8"/><path d="M-6.5 -3l4-3.5h9l-4 3.5z" fill="#eaf2fa"/><path d="M2.5 -3l4-3.5v9.5l-4 3.5z" fill="#c9dcf0"/><path d="M-6.5 -3h9v9.5h-9zM-6.5 -3l4-3.5h9v9.5l-4 3.5M2.5 -3l4-3.5" fill="none" stroke="#5f8fc8" stroke-width="0.9"/><path d="M-6.5 -3h9v9.5" fill="none" stroke="#5f8fc8" stroke-width="0.8"/></g><g transform="translate(56.9 124)"><rect x="-2.5" y="-6.5" width="9" height="9.5" fill="#f4f8fc"/><path d="M-6.5 -3l4-3.5v9.5l-4 3.5z" fill="#3a6ea8"/><path d="M-6.5 -3l4-3.5h9l-4 3.5z" fill="#eaf2fa"/><path d="M2.5 -3l4-3.5v9.5l-4 3.5z" fill="#c9dcf0"/><path d="M-6.5 -3h9v9.5h-9zM-6.5 -3l4-3.5h9v9.5l-4 3.5M2.5 -3l4-3.5" fill="none" stroke="#5f8fc8" stroke-width="0.9"/></g><g transform="translate(76.8 124)"><rect x="-2.5" y="-6.5" width="9" height="9.5" fill="#f4f8fc"/><path d="M-6.5 -3l4-3.5h9l-4 3.5z" fill="#eaf2fa"/><path d="M2.5 -3l4-3.5v9.5l-4 3.5z" fill="#3a6ea8"/><rect x="-6.5" y="-3" width="9" height="9.5" fill="url(#gv)"/><path d="M-6.5 -3h9v9.5h-9zM-6.5 -3l4-3.5h9v9.5l-4 3.5M2.5 -3l4-3.5" fill="none" stroke="#5f8fc8" stroke-width="0.9"/></g><g transform="translate(96.9 124)"><rect x="-2.5" y="-6.5" width="9" height="9.5" fill="#f4f8fc"/><path d="M-6.5 -3l4-3.5h9l-4 3.5z" fill="#eaf2fa"/><path d="M2.5 -3l4-3.5v9.5l-4 3.5z" fill="#c9dcf0"/><rect x="-6.5" y="-3" width="9" height="9.5" fill="#3a6ea8"/><path d="M-6.5 -3h9v9.5h-9zM-6.5 -3l4-3.5h9v9.5l-4 3.5M2.5 -3l4-3.5" fill="none" stroke="#5f8fc8" stroke-width="0.9"/></g><g transform="translate(116.8 124)"><rect x="-2.5" y="-6.5" width="9" height="9.5" fill="#3a6ea8"/><path d="M-6.5 -3l4-3.5h9l-4 3.5z" fill="#eaf2fa"/><path d="M2.5 -3l4-3.5v9.5l-4 3.5z" fill="#c9dcf0"/><path d="M-6.5 -3h9v9.5h-9zM-6.5 -3l4-3.5h9v9.5l-4 3.5M2.5 -3l4-3.5" fill="none" stroke="#5f8fc8" stroke-width="0.9"/></g><g transform="translate(141.6 124)"><path d="M0 -7l6 4.5v6l-6 4.5l-6-4.5v-6z" fill="#f4f8fc"/><path d="M-6 -2.5l6 4v6.5l-6-4.5z" fill="#3a6ea8"/><path d="M6 -2.5l-6 4v6.5l6-4.5z" fill="#dfeaf6"/><path d="M0 -7l6 4.5l-6 4l-6-4z" fill="#f4f8fc"/><path d="M0 -7l6 4.5v6l-6 4.5l-6-4.5v-6zM-6 -2.5l6 4l6-4M0 1.5v6.5" fill="none" stroke="#5f8fc8" stroke-width="0.8"/></g><g transform="translate(161.9 124)"><path d="M0 -7l6 4.5v6l-6 4.5l-6-4.5v-6z" fill="#f4f8fc"/><path d="M-6 -2.5l6 4v6.5l-6-4.5z" fill="#dfeaf6"/><path d="M6 -2.5l-6 4v6.5l6-4.5z" fill="#3a6ea8"/><path d="M0 -7l6 4.5l-6 4l-6-4z" fill="#f4f8fc"/><path d="M0 -7l6 4.5v6l-6 4.5l-6-4.5v-6zM-6 -2.5l6 4l6-4M0 1.5v6.5" fill="none" stroke="#5f8fc8" stroke-width="0.8"/></g><g transform="translate(182.2 124)"><path d="M0 -7l6 4.5v6l-6 4.5l-6-4.5v-6z" fill="#f4f8fc"/><path d="M-6 -2.5l6 4v6.5l-6-4.5z" fill="#dfeaf6"/><path d="M6 -2.5l-6 4v6.5l6-4.5z" fill="#dfeaf6"/><path d="M0 -7l6 4.5l-6 4l-6-4z" fill="#f4f8fc"/><path d="M0 -7l6 4.5v6l-6-4.5z" fill="#3a6ea8"/><path d="M0 -7l6 4.5v6l-6 4.5l-6-4.5v-6zM-6 -2.5l6 4l6-4M0 1.5v6.5" fill="none" stroke="#5f8fc8" stroke-width="0.8"/></g><g transform="translate(202 124)"><path d="M0 -7l6 4.5v6l-6 4.5l-6-4.5v-6z" fill="#f4f8fc"/><path d="M-6 -2.5l6 4v6.5l-6-4.5z" fill="#dfeaf6"/><path d="M6 -2.5l-6 4v6.5l6-4.5z" fill="#dfeaf6"/><path d="M0 -7l6 4.5l-6 4l-6-4z" fill="#f4f8fc"/><path d="M0 -7l-6 4.5v6l6-4.5z" fill="#3a6ea8"/><path d="M0 -7l6 4.5v6l-6 4.5l-6-4.5v-6zM-6 -2.5l6 4l6-4M0 1.5v6.5" fill="none" stroke="#5f8fc8" stroke-width="0.8"/></g><g transform="translate(227.5 124)"><rect x="-7" y="-3" width="14" height="9.5" rx="1" fill="#222"/><rect x="-2" y="-5.5" width="5" height="3" fill="#333"/><circle cx="1.2" cy="1.5" r="3.3" fill="#555" stroke="#999" stroke-width="0.8"/><rect x="-6" y="-1.5" width="2.6" height="1.6" fill="#bbb"/><path d="M1 -7l1 2M4 -6.5l-0.6 1.6" stroke="#9ab" stroke-width="0.8"/></g><g transform="translate(253 124)"><circle r="6.5" fill="#eef4fa" stroke="#9fb6d0" stroke-width="1.1"/><path d="M-4.5 0l4.5-4v2.4h4v3.2h-4v2.4z" fill="#8aa4c2"/></g><g transform="translate(410.6 124)"><rect x="-6.3" y="-6.3" width="12.4" height="8.6" fill="#fdfdfd" stroke="#222" stroke-width="1.2"/><path d="M-3.4 6.6h10.6M-2.8 6.6l4.7-9.8l4.7 9.8" fill="none" stroke="#222" stroke-width="1.15"/></g><g transform="translate(436.6 124)"><path d="M-6 -2.5l3.5-3h8.5v8l-3.5 3.5h-8.5z" fill="#fdfdfd" stroke="#222" stroke-width="1.2"/><path d="M-6 -2.5h8.5v8.5M2.5 -2.5l3.5-3" fill="none" stroke="#222" stroke-width="1.1"/><rect x="-4.8" y="-1.2" width="6" height="6" fill="#b4d0ec"/></g><g transform="translate(456.7 124)"><path d="M0.5 -7l6 3v7l-6 4l-6.5-3.5v-7z" fill="#fff" stroke="#222" stroke-width="1.2"/><path d="M-6 -4l6.5 3.5l6-3M0.5 -0.5v7.5" fill="none" stroke="#222" stroke-width="1"/></g><g transform="translate(475.6 124)"><ellipse cx="1" cy="6" rx="5.5" ry="1.3" fill="#bbb"/><circle cx="0" cy="-0.5" r="6.2" fill="url(#gr2)" stroke="#34587e" stroke-width="0.8"/><path d="M-4 -4.5l8 8M4.5 -4.5q-3 5-8.5 7" stroke="#1f3a5e" stroke-width="1.2" fill="none"/></g><g transform="translate(496 124)"><circle r="6.5" fill="url(#go)"/></g><g transform="translate(522 124)"><circle cx="-1.5" cy="-1.5" r="5.2" fill="url(#gr2)" stroke="#3f6a9e" stroke-width="0.7"/><rect x="0.5" y="-4" width="6" height="10.5" fill="#dce9f6" stroke="#2f5f9e" stroke-width="1.1"/><rect x="1.8" y="-2.4" width="3.4" height="2" fill="#3c78c4"/><path d="M1.8 1.5h3.4M1.8 3.5h3.4" stroke="#2f5f9e" stroke-width="0.9"/></g><g transform="translate(557.3 124)"><ellipse cx="0" cy="2" rx="6.3" ry="2.8" fill="#a8c4e4" stroke="#4a80c0" stroke-width="1.5"/><path d="M0 -7l-2.2 3.2h1.5v9.2h1.4v-9.2h1.5z" fill="#44587c"/><path d="M0 7.3l-1.7-2.3h3.4z" fill="#44587c"/></g><g transform="translate(577 124)"><circle cx="-0.5" cy="0.5" r="5" fill="#e8eef6" stroke="#9fb0c8" stroke-width="0.8"/><path d="M-6.5 4q6 2 12-6.5" fill="none" stroke="#2f66aa" stroke-width="1.7"/><path d="M6.5 -6l-3.6 1l2.6 2.4z" fill="#2f66aa"/><path d="M-5 -2q3-2.5 7-1.8" stroke="#7a9ac8" stroke-width="1" fill="none"/></g><g transform="translate(598 124)"><path d="M-4 -3l5.5-3.5l4.5 3l-5 4.5z" fill="#4aa84a" stroke="#2a7a2a" stroke-width="0.7"/><path d="M-4 -3l5 4v4l-5-3.5z" fill="#3a8a3a"/><path d="M1 1l5-4.5v4l-5 4.5z" fill="#6ac06a"/><circle cx="5.2" cy="-5" r="2" fill="#f0d838"/><path d="M-6.5 6.5l5.5-5" stroke="#1f3f9a" stroke-width="1.8"/><path d="M0.5 0l-4 0.8l3 3z" fill="#1f3f9a"/></g><g transform="translate(633.3 124)"><path d="M1.8 2l4.6 4.8" stroke="#8a6236" stroke-width="2" stroke-linecap="round"/><circle cx="-1.2" cy="-1.2" r="4.8" fill="#c4d4e6" stroke="#4f6688" stroke-width="1.6"/><rect x="-3.4" y="-3.4" width="4" height="4" fill="#fff" stroke="#2a4a9c" stroke-width="1.1"/><path d="M-4.5 -4.5h3M-4.5 -4.5v3" stroke="#2a4a9c" stroke-width="1"/></g><g transform="translate(653.5 124)"><path d="M1.8 2l4.6 4.8" stroke="#8a6236" stroke-width="2" stroke-linecap="round"/><circle cx="-1.2" cy="-1.2" r="4.8" fill="#c4d4e6" stroke="#4f6688" stroke-width="1.6"/><path d="M-3.6 -2v-1.6h1.6M-0.4 -3.6h1.6v1.6M1.2 -0.4v1.6h-1.6M-2 1.2h-1.6v-1.6" fill="none" stroke="#1f3f7a" stroke-width="1.2"/></g><g transform="translate(674 124)"><path d="M1.8 2l4.6 4.8" stroke="#8a6236" stroke-width="2" stroke-linecap="round"/><circle cx="-1.2" cy="-1.2" r="4.8" fill="#c4d4e6" stroke="#4f6688" stroke-width="1.6"/><path d="M-3.2 -3.2l4 4M0.8 -3.2l-4 4" stroke="#1f3f7a" stroke-width="1.4"/></g><g transform="translate(694.3 124)"><path d="M1.8 2l4.6 4.8" stroke="#8a6236" stroke-width="2" stroke-linecap="round"/><circle cx="-1.2" cy="-1.2" r="4.8" fill="#c4d4e6" stroke="#4f6688" stroke-width="1.6"/><path d="M-3.6 -3.6l1.8 1.8M1.2 -3.6l-1.8 1.8M-3.6 1.2l1.8-1.8M1.2 1.2l-1.8-1.8" stroke="#1f3f7a" stroke-width="1.2"/><rect x="-2" y="-2" width="1.6" height="1.6" fill="#1f3f7a"/></g><g transform="translate(714.3 124)"><path d="M1.8 2l4.6 4.8" stroke="#8a6236" stroke-width="2" stroke-linecap="round"/><circle cx="-1.2" cy="-1.2" r="4.8" fill="#c4d4e6" stroke="#4f6688" stroke-width="1.6"/><path d="M-3.5 -1.5l2.5-2.5l3 1.5l-2 3.5l-2.5 0.5z" fill="#2a9a3a" stroke="#1a5a2a" stroke-width="0.6"/></g><g transform="translate(739.3 124)"><path d="M1.8 2l4.6 4.8" stroke="#8a6236" stroke-width="2" stroke-linecap="round"/><circle cx="-1.2" cy="-1.2" r="4.8" fill="#c4d4e6" stroke="#4f6688" stroke-width="1.6"/><path d="M-4.4 -1.2h6.4M-1.2 -4.4v6.4" stroke="#1f4f9a" stroke-width="1.8"/></g><g transform="translate(759.3 124)"><path d="M1.8 2l4.6 4.8" stroke="#8a6236" stroke-width="2" stroke-linecap="round"/><circle cx="-1.2" cy="-1.2" r="4.8" fill="#c4d4e6" stroke="#4f6688" stroke-width="1.6"/><path d="M-4.2 -1.2h6" stroke="#4a6aa0" stroke-width="1.8"/></g><g transform="translate(785 124)"><path d="M1.8 2l4.6 4.8" stroke="#8a6236" stroke-width="2" stroke-linecap="round"/><circle cx="-1.2" cy="-1.2" r="4.8" fill="#c4d4e6" stroke="#4f6688" stroke-width="1.6"/><path d="M-3 -4h2.6l1.6 1.6v4h-4.2z" fill="#fff" stroke="#1f3f7a" stroke-width="1"/></g><g transform="translate(805.4 124)"><path d="M1.8 2l4.6 4.8" stroke="#8a6236" stroke-width="2" stroke-linecap="round"/><circle cx="-1.2" cy="-1.2" r="4.8" fill="#c4d4e6" stroke="#4f6688" stroke-width="1.6"/><path d="M-1.2 -4.8l1.6 1.8h-3.2zM-1.2 2.4l1.6-1.8h-3.2zM-4.8 -1.2l1.8-1.6v3.2zM2.4 -1.2l-1.8-1.6v3.2z" fill="#1f3f7a"/><rect x="-2" y="-2" width="1.6" height="1.6" fill="#1f3f7a"/></g><rect x="129.04999999999998" y="115.5" width="1.1" height="17" fill="#999"/><rect x="130.15" y="115.5" width="0.8" height="17" fill="#fcfcfc"/><rect x="214.75" y="115.5" width="1.1" height="17" fill="#999"/><rect x="215.85000000000002" y="115.5" width="0.8" height="17" fill="#fcfcfc"/><rect x="239.75" y="115.5" width="1.1" height="17" fill="#999"/><rect x="240.85000000000002" y="115.5" width="0.8" height="17" fill="#fcfcfc"/><rect x="422.84999999999997" y="115.5" width="1.1" height="17" fill="#999"/><rect x="423.95" y="115.5" width="0.8" height="17" fill="#fcfcfc"/><rect x="508.95" y="115.5" width="1.1" height="17" fill="#999"/><rect x="510.05" y="115.5" width="0.8" height="17" fill="#fcfcfc"/><rect x="726.45" y="115.5" width="1.1" height="17" fill="#999"/><rect x="727.55" y="115.5" width="0.8" height="17" fill="#fcfcfc"/><rect x="771.95" y="115.5" width="1.1" height="17" fill="#999"/><rect x="773.05" y="115.5" width="0.8" height="17" fill="#fcfcfc"/><rect x="3.8500000000000005" y="116.0" width="1.1" height="16" fill="#999"/><rect x="4.95" y="116.0" width="0.8" height="16" fill="#fcfcfc"/><rect x="388.8" y="112" width="1" height="23" fill="#c9c9c9"/><rect x="389.8" y="112" width="1" height="23" fill="#fbfbfb"/><rect x="393.9" y="114.0" width="1" height="20" fill="#b4b4b4"/><rect x="394.9" y="114.0" width="1" height="20" fill="#fff"/><rect x="397.9" y="114.0" width="1" height="20" fill="#b4b4b4"/><rect x="398.9" y="114.0" width="1" height="20" fill="#fff"/><rect x="534.9" y="112" width="1" height="23" fill="#c9c9c9"/><rect x="535.9" y="112" width="1" height="23" fill="#fbfbfb"/><rect x="540.0" y="114.0" width="1" height="20" fill="#b4b4b4"/><rect x="541.0" y="114.0" width="1" height="20" fill="#fff"/><rect x="544.0" y="114.0" width="1" height="20" fill="#b4b4b4"/><rect x="545.0" y="114.0" width="1" height="20" fill="#fff"/><rect x="610.3" y="112" width="1" height="23" fill="#c9c9c9"/><rect x="611.3" y="112" width="1" height="23" fill="#fbfbfb"/><rect x="615.9" y="114.0" width="1" height="20" fill="#b4b4b4"/><rect x="616.9" y="114.0" width="1" height="20" fill="#fff"/><rect x="619.9" y="114.0" width="1" height="20" fill="#b4b4b4"/><rect x="620.9" y="114.0" width="1" height="20" fill="#fff"/><rect x="817.0" y="112" width="1" height="23" fill="#c9c9c9"/><rect x="818.0" y="112" width="1" height="23" fill="#fbfbfb"/></svg></div>
<div id="left"><svg width="17" height="512" viewBox="0 137 17 512" style="left:0;top:0"><rect x="0" y="137" width="17" height="512" fill="#f2f2f2"/><rect x="0" y="138" width="13.5" height="339" fill="#f6f6f6"/><rect x="13.5" y="138" width="1" height="339" fill="#dadada"/><rect x="0" y="476.5" width="14" height="1" fill="#d4d4d4"/><rect x="0" y="481.5" width="14" height="1" fill="#d4d4d4"/><rect x="0" y="482.5" width="13.5" height="46" fill="#f6f6f6"/><rect x="13.5" y="482" width="1" height="47" fill="#dadada"/><rect x="0" y="528.5" width="14" height="1" fill="#d4d4d4"/><g transform="translate(5 156)"><path d="M-5 5.5h12" stroke="#333" stroke-width="1"/><path d="M6.5 -6l-9 8.5" stroke="#e8c060" stroke-width="3"/><path d="M-2.5 2.5l-2.5 2.3" stroke="#e07070" stroke-width="3"/></g><g transform="translate(5 174.8)"><circle cx="-1" cy="2" r="3" fill="none" stroke="#222" stroke-width="1.2"/><circle cx="3.2" cy="3.6" r="3" fill="none" stroke="#222" stroke-width="1.2"/><path d="M-4 -4.5q4-3 7 0.5" fill="none" stroke="#2a5a9c" stroke-width="1.4"/><path d="M4.5 -2l-0.2-3.4l-2.8 1.8z" fill="#2a5a9c"/></g><g transform="translate(5 193.5)"><path d="M-0.5 -7v14" stroke="#222" stroke-width="0.9" stroke-dasharray="2 1"/><path d="M-2.5 -5v10h-4z" fill="#cfe0f2" stroke="#222" stroke-width="1"/><path d="M1.5 -5v10h5z" fill="#cfe0f2" stroke="#222" stroke-width="1"/></g><g transform="translate(5 212)"><path d="M-6 3h3.5v-3a3.2 3.2 0 0 1 6.4 0v3h3.5" fill="none" stroke="#2a5a9c" stroke-width="1.3"/><path d="M-6 6.3h13.5" stroke="#2a5a9c" stroke-width="1.3"/><path d="M-1 2.5v-2.5a1.6 1.6 0 0 1 3.2 0v2.5" fill="none" stroke="#222" stroke-width="1"/></g><g transform="translate(5 231)"><rect x="-6.5" y="-6.5" width="5" height="5" fill="#fff" stroke="#222" stroke-width="1.1"/><rect x="1" y="-6.5" width="5" height="5" fill="#fff" stroke="#222" stroke-width="1.1"/><rect x="-6.5" y="1" width="5" height="5" fill="#fff" stroke="#222" stroke-width="1.1"/><rect x="1" y="1" width="5" height="5" fill="#fff" stroke="#222" stroke-width="1.1"/></g><g transform="translate(5 251)"><path d="M0 -6.5v13M-6.5 0h13" stroke="#2a5a9c" stroke-width="1.8"/><path d="M0 -7.5l2.6 3h-5.2zM0 7.5l2.6-3h-5.2zM-7.5 0l3-2.6v5.2zM7.5 0l-3-2.6v5.2z" fill="#2a5a9c"/></g><g transform="translate(5 269.8)"><path d="M-2.5 -4.6a5.6 5.6 0 1 1 -3 6" fill="none" stroke="#2a5a9c" stroke-width="1.7"/><path d="M-5.5 -6.5l4.6 0.6l-3.4 3.4z" fill="#2a5a9c"/></g><g transform="translate(5 288.5)"><rect x="-6.5" y="-5.5" width="12.5" height="11.5" fill="#dce9f6" stroke="#7a8aa0" stroke-width="0.9"/><rect x="-6.5" y="0.5" width="5.5" height="5.5" fill="#fff" stroke="#222" stroke-width="0.9" stroke-dasharray="1.5 1"/></g><g transform="translate(5 308)"><path d="M-5.5 -6h3.5l6.5 12h-10z" fill="#dce9f6" stroke="#222" stroke-width="1"/><path d="M-2 -6v12" stroke="#222" stroke-width="0.9" stroke-dasharray="1.5 1"/></g><g transform="translate(5 326.7)"><path d="M-6.5 1.5h13" stroke="#2a5a9c" stroke-width="1" stroke-dasharray="2.5 1.2"/><path d="M3.5 -5.5l-6 10.5" stroke="#2a5a9c" stroke-width="1.5"/></g><g transform="translate(5 346)"><path d="M-6.5 1.5h8.5" stroke="#2a5a9c" stroke-width="1" stroke-dasharray="2.5 1.2"/><path d="M6.5 -5l-4.5 10" stroke="#2a5a9c" stroke-width="1.5"/></g><g transform="translate(5 365)"><rect x="-6.5" y="-3.5" width="12" height="7.5" fill="#dce9f6" stroke="#222" stroke-width="1.1"/><rect x="-1" y="-5" width="2" height="3" fill="#f6f6f6"/></g><g transform="translate(5 384)"><rect x="-6.5" y="-3.5" width="12" height="7.5" fill="#dce9f6" stroke="#222" stroke-width="1.1"/><rect x="-2" y="-5" width="4" height="3" fill="#f6f6f6"/></g><g transform="translate(5 404.3)"><path d="M-6.5 0h4.5M6.5 0h-4.5" stroke="#222" stroke-width="1.6"/><path d="M-0.5 0l-3-2.4v4.8zM0.5 0l3-2.4v4.8z" fill="#222"/></g><g transform="translate(5 420)"><path d="M-6.5 3l4-4.5h9.5" fill="none" stroke="#222" stroke-width="1.3"/><path d="M-6.5 3l4-4.5" stroke="#2a5a9c" stroke-width="1.6"/></g><g transform="translate(5 438.3)"><path d="M-6.5 3q1-4.5 5.5-4.5h8" fill="none" stroke="#222" stroke-width="1.3"/><path d="M-6.5 3q1-4.5 5.5-4.5" stroke="#2a5a9c" stroke-width="1.6" fill="none"/></g><g transform="translate(5 461.5)"><path d="M-4 4l2-6l3 3z" fill="#e04828"/><path d="M-1 -1l5-5l1 5z" fill="#f0a030"/><path d="M-5 -3l3 1l-2 2z" fill="#f0d040"/><path d="M3 -7l3.5 1.5l-2 2.5z" fill="#d8d8e8" stroke="#8a8aa0" stroke-width="0.5"/><path d="M-6 6l3-1.5l0.5 2.5z" fill="#a02818"/></g><g transform="translate(5 499.3)"><path d="M-6.5 5.5h11" stroke="#2a5a9c" stroke-width="1.3"/><path d="M-6 3.5l6-8" stroke="#222" stroke-width="1"/><path d="M4.5 5.5l-3-1.8v3.6z" fill="#2a5a9c"/></g><g transform="translate(5 516)"><rect x="-2" y="-5.5" width="9" height="7" fill="#cfe0f2" stroke="#2a5a9c" stroke-width="1.3"/><path d="M-6.5 5.5h8" stroke="#2a5a9c" stroke-width="1.2"/><path d="M2.5 5.5l-3-1.8v3.6z" fill="#2a5a9c"/></g></svg></div>
<div id="canvas">
<svg width="1263" height="494" viewBox="17 137 1263 494" style="left:-1px;top:-0.8px">
<polygon points="218.6,465.1 489.2,621.4 489.2,551.8 259.2,419.0 259.2,304.2 218.6,280.7" fill="#4a69a6" stroke="#08133a" stroke-width="0.9" stroke-linejoin="round"/><polygon points="218.6,280.7 259.2,304.2 302.5,229.2 261.9,205.7" fill="#5a66c6" stroke="#08133a" stroke-width="0.9" stroke-linejoin="round"/><polygon points="261.9,205.7 302.5,229.2 389.1,179.2 348.5,155.7" fill="#5068b8" stroke="#08133a" stroke-width="0.9" stroke-linejoin="round"/><polygon points="259.2,419.0 259.2,304.2 302.5,229.2 389.1,179.2 432.4,204.2 432.4,319.0" fill="#2e7a6d" stroke="#08133a" stroke-width="0.9" stroke-linejoin="round"/><polygon points="259.2,419.0 489.2,551.8 662.4,451.8 432.4,319.0" fill="#5269b6" stroke="#08133a" stroke-width="0.9" stroke-linejoin="round"/><polygon points="489.2,621.4 554.2,583.9 535.2,557.3 616.4,510.4 597.5,558.9 662.4,521.4 662.4,451.8 489.2,551.8" fill="#2e7a6d" stroke="#08133a" stroke-width="0.9" stroke-linejoin="round"/><polygon points="616.4,510.4 597.5,558.9 566.2,540.8" fill="#5468c0" stroke="#08133a" stroke-width="0.8" stroke-linejoin="round"/><polygon points="329.6,254.2 362.0,235.4 551.5,469.0 519.0,487.8" fill="#4c69aa" stroke="#08133a" stroke-width="0.9" stroke-linejoin="round"/><polygon points="329.6,378.4 329.6,254.2 519.0,487.8" fill="#4a69a6" stroke="#08133a" stroke-width="0.9" stroke-linejoin="round"/><path d="M218.6 465.1 L218.6 280.7 L261.9 205.7 L348.5 155.7 L389.1 179.2 L432.4 204.2 L432.4 319.0 L662.4 451.8 L662.4 521.4 L597.5 558.9" fill="none" stroke="#000" stroke-width="1.6" stroke-linejoin="round"/><path d="M218.6 465.1 L489.2 621.4 L554.2 583.9" fill="none" stroke="#000" stroke-width="1.6" stroke-linejoin="round"/>
<rect x="720.5" y="137" width="516.7" height="487.2" fill="#fff"/><rect x="719" y="393.5" width="2.5" height="1" fill="#333"/><line x1="853.5" y1="243.0" x2="915.8" y2="204.2" stroke="#111" stroke-width="2.3" stroke-linecap="round"/><line x1="915.8" y1="204.2" x2="980.0" y2="239.4" stroke="#111" stroke-width="2.3" stroke-linecap="round"/><line x1="853.5" y1="243.0" x2="824.5" y2="297.6" stroke="#111" stroke-width="2.3" stroke-linecap="round"/><line x1="824.5" y1="297.6" x2="854.5" y2="312.7" stroke="#111" stroke-width="2.3" stroke-linecap="round"/><line x1="854.5" y1="312.7" x2="883.6" y2="259.8" stroke="#111" stroke-width="2.3" stroke-linecap="round"/><line x1="883.6" y1="259.8" x2="853.5" y2="243.0" stroke="#111" stroke-width="2.3" stroke-linecap="round"/><line x1="883.6" y1="259.8" x2="947.5" y2="222.0" stroke="#111" stroke-width="2.3" stroke-linecap="round"/><line x1="980.0" y1="239.4" x2="982.7" y2="322.8" stroke="#111" stroke-width="2.0" stroke-linecap="round"/><line x1="824.5" y1="297.6" x2="829.8" y2="427.2" stroke="#111" stroke-width="1.8" stroke-linecap="round"/><line x1="854.5" y1="312.7" x2="859.2" y2="395.0" stroke="#111" stroke-width="1.8" stroke-linecap="round"/><line x1="829.8" y1="427.2" x2="1025.6" y2="531.5" stroke="#111" stroke-width="2.3" stroke-linecap="round"/><line x1="859.2" y1="395.0" x2="1025.6" y2="484.9" stroke="#111" stroke-width="2.3" stroke-linecap="round"/><line x1="1025.6" y1="484.9" x2="1025.6" y2="531.5" stroke="#111" stroke-width="1.4" stroke-linecap="round"/><line x1="1025.6" y1="484.9" x2="1145.0" y2="412.4" stroke="#111" stroke-width="2.3" stroke-linecap="round"/><line x1="1145.0" y1="412.4" x2="1148.8" y2="458.6" stroke="#111" stroke-width="1.4" stroke-linecap="round"/><line x1="982.7" y1="322.8" x2="1145.0" y2="412.4" stroke="#111" stroke-width="2.3" stroke-linecap="round"/><line x1="1025.6" y1="531.5" x2="1069.3" y2="506.2" stroke="#111" stroke-width="2.3" stroke-linecap="round"/><line x1="1069.3" y1="506.2" x2="1055.7" y2="489.3" stroke="#111" stroke-width="2.3" stroke-linecap="round"/><line x1="1055.7" y1="489.3" x2="1112.2" y2="454.0" stroke="#111" stroke-width="2.3" stroke-linecap="round"/><line x1="1112.2" y1="454.0" x2="1103.2" y2="486.5" stroke="#111" stroke-width="2.3" stroke-linecap="round"/><line x1="1103.2" y1="486.5" x2="1148.8" y2="458.6" stroke="#111" stroke-width="2.3" stroke-linecap="round"/><line x1="1080.2" y1="475.2" x2="1103.2" y2="486.5" stroke="#111" stroke-width="2.3" stroke-linecap="round"/><line x1="905.2" y1="279.2" x2="927.1" y2="265.5" stroke="#111" stroke-width="2.3" stroke-linecap="round"/><line x1="905.2" y1="279.2" x2="906.9" y2="367.1" stroke="#111" stroke-width="1.9" stroke-linecap="round"/><line x1="906.9" y1="367.1" x2="859.2" y2="395.0" stroke="#111" stroke-width="2.3" stroke-linecap="round"/><line x1="905.2" y1="279.2" x2="1043.1" y2="439.2" stroke="#111" stroke-width="2.3" stroke-linecap="round"/><line x1="927.1" y1="265.5" x2="1064.4" y2="425.8" stroke="#111" stroke-width="2.3" stroke-linecap="round"/><line x1="1043.1" y1="439.2" x2="1064.4" y2="425.8" stroke="#111" stroke-width="2.3" stroke-linecap="round"/><line x1="906.9" y1="367.1" x2="1043.1" y2="439.2" stroke="#111" stroke-width="2.3" stroke-linecap="round"/><line x1="915.8" y1="204.2" x2="954.6" y2="180.2" stroke="#111" stroke-width="1.25" stroke-linecap="round"/><line x1="947.5" y1="222.0" x2="987.3" y2="197.6" stroke="#111" stroke-width="1.25" stroke-linecap="round"/><line x1="918.4" y1="171.8" x2="1007.5" y2="217.1" stroke="#111" stroke-width="1.25" stroke-linecap="round"/><line x1="853.4" y1="198.1" x2="853.5" y2="243.0" stroke="#111" stroke-width="1.25" stroke-linecap="round"/><line x1="824.4" y1="215.0" x2="824.5" y2="297.6" stroke="#111" stroke-width="1.25" stroke-linecap="round"/><line x1="802.8" y1="235.6" x2="877.8" y2="194.4" stroke="#111" stroke-width="1.25" stroke-linecap="round"/><line x1="853.5" y1="243.0" x2="758.4" y2="298.4" stroke="#111" stroke-width="1.25" stroke-linecap="round"/><line x1="824.5" y1="297.6" x2="780.9" y2="320.9" stroke="#111" stroke-width="1.25" stroke-linecap="round"/><line x1="905.2" y1="279.2" x2="779.1" y2="354.7" stroke="#111" stroke-width="1.25" stroke-linecap="round"/><line x1="859.2" y1="395.0" x2="782.7" y2="440.8" stroke="#111" stroke-width="1.25" stroke-linecap="round"/><line x1="829.8" y1="427.2" x2="760.8" y2="467.1" stroke="#111" stroke-width="1.25" stroke-linecap="round"/><line x1="793.0" y1="250.5" x2="794.6" y2="337.8" stroke="#111" stroke-width="1.25" stroke-linecap="round"/><line x1="768.8" y1="294.7" x2="776.9" y2="456.9" stroke="#111" stroke-width="1.25" stroke-linecap="round"/><line x1="790.9" y1="351.9" x2="795.2" y2="432.1" stroke="#111" stroke-width="1.25" stroke-linecap="round"/><line x1="795.6" y1="433.8" x2="927.8" y2="507.1" stroke="#111" stroke-width="1.25" stroke-linecap="round"/><line x1="1043.1" y1="439.2" x2="917.8" y2="515.1" stroke="#111" stroke-width="1.25" stroke-linecap="round"/><line x1="776.7" y1="458.9" x2="967.8" y2="564.4" stroke="#111" stroke-width="1.25" stroke-linecap="round"/><line x1="1025.6" y1="531.5" x2="955.6" y2="573.3" stroke="#111" stroke-width="1.25" stroke-linecap="round"/><line x1="747.4" y1="539.8" x2="800.0" y2="504.8" stroke="#111" stroke-width="1.25" stroke-linecap="round"/><line x1="1025.6" y1="531.5" x2="1026.5" y2="602.3" stroke="#111" stroke-width="1.25" stroke-linecap="round"/><line x1="1055.7" y1="489.3" x2="1055.7" y2="561.0" stroke="#111" stroke-width="1.25" stroke-linecap="round"/><line x1="1112.2" y1="454.0" x2="1116.6" y2="525.4" stroke="#111" stroke-width="1.25" stroke-linecap="round"/><line x1="1148.8" y1="458.6" x2="1153.0" y2="535.8" stroke="#111" stroke-width="1.25" stroke-linecap="round"/><line x1="1056.3" y1="547.8" x2="1116.0" y2="515.1" stroke="#111" stroke-width="1.25" stroke-linecap="round"/><line x1="1027.1" y1="596.5" x2="1151.6" y2="525.4" stroke="#111" stroke-width="1.25" stroke-linecap="round"/><line x1="1145.0" y1="412.4" x2="1205.6" y2="377.2" stroke="#111" stroke-width="1.25" stroke-linecap="round"/><line x1="1148.8" y1="458.6" x2="1208.3" y2="424.2" stroke="#111" stroke-width="1.25" stroke-linecap="round"/><line x1="1112.2" y1="454.0" x2="1174.9" y2="415.1" stroke="#111" stroke-width="1.25" stroke-linecap="round"/><line x1="1196.9" y1="384.4" x2="1199.8" y2="429.6" stroke="#111" stroke-width="1.25" stroke-linecap="round"/><line x1="1170.4" y1="402.5" x2="1176.3" y2="463.0" stroke="#111" stroke-width="1.25" stroke-linecap="round"/><line x1="1112.2" y1="454.0" x2="1118.9" y2="438.6" stroke="#111" stroke-width="1.25" stroke-linecap="round"/><line x1="1105.3" y1="441.3" x2="1112.2" y2="454.0" stroke="#111" stroke-width="1.25" stroke-linecap="round"/><line x1="973.1" y1="388.2" x2="1030.0" y2="354.3" stroke="#111" stroke-width="1.25" stroke-linecap="round"/><path d="M1113.5 454.5 Q1124 460 1126 477" fill="none" stroke="#111" stroke-width="1.1"/><polygon points="946.0,185.8 933.2,173.5 934.8,180.1 928.5,182.7" fill="#111"/><polygon points="977.5,202.1 990.4,214.4 988.8,207.7 995.0,205.1" fill="#111"/><polygon points="824.4,223.4 807.0,227.2 813.4,229.6 812.2,236.3" fill="#111"/><polygon points="853.4,207.5 870.8,204.0 864.5,201.5 865.9,194.9" fill="#111"/><polygon points="793.5,277.8 798.4,260.7 793.3,265.2 788.0,260.9" fill="#111"/><polygon points="794.6,314.4 789.4,331.4 794.6,327.0 799.8,331.4" fill="#111"/><polygon points="768.8,294.7 764.4,311.9 769.4,307.3 774.8,311.4" fill="#111"/><polygon points="776.9,456.9 781.2,439.7 776.3,444.3 770.9,440.2" fill="#111"/><polygon points="790.9,351.9 786.6,369.2 791.6,364.5 797.0,368.6" fill="#111"/><polygon points="795.2,432.1 799.5,414.8 794.5,419.5 789.1,415.4" fill="#111"/><polygon points="795.6,433.8 807.9,446.6 806.6,439.9 813.0,437.5" fill="#111"/><polygon points="927.8,507.1 915.5,494.3 916.8,501.0 910.4,503.4" fill="#111"/><polygon points="776.7,458.9 789.1,471.7 787.7,465.0 794.1,462.6" fill="#111"/><polygon points="967.8,564.4 955.4,551.6 956.8,558.3 950.4,560.7" fill="#111"/><polygon points="805.6,501.1 788.8,506.5 795.1,508.1 794.1,514.5" fill="#111"/><polygon points="1056.3,547.8 1073.7,544.2 1067.3,541.8 1068.7,535.1" fill="#111"/><polygon points="1116.0,515.1 1098.6,518.7 1105.0,521.1 1103.6,527.8" fill="#111"/><polygon points="1027.1,596.5 1044.4,592.6 1038.0,590.3 1039.3,583.6" fill="#111"/><polygon points="1151.6,525.4 1134.3,529.3 1140.7,531.6 1139.4,538.3" fill="#111"/><polygon points="1196.9,384.4 1193.4,399.7 1197.6,395.5 1202.4,399.1" fill="#111"/><polygon points="1199.8,429.6 1203.3,413.3 1199.0,417.8 1194.3,413.9" fill="#111"/><polygon points="1172.2,416.0 1173.4,403.7 1171.0,407.2 1167.8,404.5" fill="#111"/><polygon points="1174.9,447.6 1172.8,456.8 1175.5,454.2 1178.6,456.3" fill="#111"/><polygon points="991.0,378.0 977.9,381.3 982.6,382.8 981.5,387.6" fill="#111"/><polygon points="1011.7,364.8 1024.8,361.5 1020.0,360.0 1021.2,355.2" fill="#111"/><polygon points="1111.7,452.4 1109.5,443.3 1108.4,446.6 1105.0,445.9" fill="#111"/><polygon points="1126.3,476.8 1128.2,486.0 1129.4,482.7 1132.8,483.5" fill="#111"/><line x1="1126.3" y1="476.8" x2="1133.5" y2="490.4" stroke="#111" stroke-width="1.1" stroke-linecap="round"/><text transform="translate(970.5 183.0) rotate(27)" x="0" y="5" text-anchor="middle" font-family="Liberation Sans, sans-serif" font-size="14.5" font-style="italic" fill="#1a1a1a" stroke="#1a1a1a" stroke-width="0.25">15</text><text transform="translate(834.7 200.0) rotate(-29)" x="0" y="5" text-anchor="middle" font-family="Liberation Sans, sans-serif" font-size="14.5" font-style="normal" fill="#1a1a1a" stroke="#1a1a1a" stroke-width="0.25">16</text><text transform="translate(783.4 301.0) rotate(-90)" x="0" y="5" text-anchor="middle" font-family="Liberation Sans, sans-serif" font-size="14.5" font-style="normal" fill="#1a1a1a" stroke="#1a1a1a" stroke-width="0.25">16</text><text transform="translate(763.5 373.0) rotate(-90)" x="0" y="5" text-anchor="middle" font-family="Liberation Sans, sans-serif" font-size="14.5" font-style="normal" fill="#1a1a1a" stroke="#1a1a1a" stroke-width="0.25">75</text><text transform="translate(785.2 391.5) rotate(-90)" x="0" y="5" text-anchor="middle" font-family="Liberation Sans, sans-serif" font-size="14.5" font-style="normal" fill="#1a1a1a" stroke="#1a1a1a" stroke-width="0.25">40</text><text transform="translate(870.4 465.6) rotate(29)" x="0" y="5" text-anchor="middle" font-family="Liberation Sans, sans-serif" font-size="14.5" font-style="italic" fill="#1a1a1a" stroke="#1a1a1a" stroke-width="0.25">70</text><text transform="translate(884.4 507.1) rotate(29)" x="0" y="5" text-anchor="middle" font-family="Liberation Sans, sans-serif" font-size="14.5" font-style="italic" fill="#1a1a1a" stroke="#1a1a1a" stroke-width="0.25">100</text><text transform="translate(993.5 362.5) rotate(-30)" x="0" y="5" text-anchor="middle" font-family="Liberation Sans, sans-serif" font-size="14.5" font-style="normal" fill="#1a1a1a" stroke="#1a1a1a" stroke-width="0.25">12</text><text transform="translate(1185.7 408.8) rotate(-90)" x="0" y="5" text-anchor="middle" font-family="Liberation Sans, sans-serif" font-size="14.5" font-style="normal" fill="#1a1a1a" stroke="#1a1a1a" stroke-width="0.25">22</text><text transform="translate(1164.0 436.8) rotate(-90)" x="0" y="5" text-anchor="middle" font-family="Liberation Sans, sans-serif" font-size="14.5" font-style="normal" fill="#1a1a1a" stroke="#1a1a1a" stroke-width="0.25">12</text><text transform="translate(1133.3 457.6) rotate(-28)" x="0" y="5" text-anchor="middle" font-family="Liberation Sans, sans-serif" font-size="14.5" font-style="normal" fill="#1a1a1a" stroke="#1a1a1a" stroke-width="0.25">60°</text><text transform="translate(1082.0 522.1) rotate(-29)" x="0" y="5" text-anchor="middle" font-family="Liberation Sans, sans-serif" font-size="14.5" font-style="normal" fill="#1a1a1a" stroke="#1a1a1a" stroke-width="0.25">30</text><text transform="translate(1097.0 546.8) rotate(-29)" x="0" y="5" text-anchor="middle" font-family="Liberation Sans, sans-serif" font-size="14.5" font-style="normal" fill="#1a1a1a" stroke="#1a1a1a" stroke-width="0.25">64</text><path d="M901 602.5l1.2-1.6 M913.5 600.8l1.8 1.8" stroke="#888" stroke-width="0.9"/>
<line x1="57.2" y1="590" x2="57.2" y2="571" stroke="#1db51d" stroke-width="3"/><polygon points="57.2,559.5 62.2,573 52.2,573" fill="#22c322"/><line x1="57.2" y1="590" x2="38" y2="601" stroke="#2a8fe0" stroke-width="3"/><polygon points="30.5,605.5 37.5,596.5 43,605.5" fill="#2a9bf0"/><line x1="57.2" y1="590" x2="76" y2="601" stroke="#d83030" stroke-width="3"/><polygon points="84.5,605.5 71,605.5 77,596.5" fill="#e83a3a"/><text x="64.6" y="555" text-anchor="middle" font-family="Liberation Sans, sans-serif" font-size="9.5" fill="#4fd24f">Y</text><text x="89" y="595.2" text-anchor="middle" font-family="Liberation Sans, sans-serif" font-size="10" fill="#e04040">X</text><text x="43.3" y="595" text-anchor="middle" font-family="Liberation Sans, sans-serif" font-size="9.5" fill="#3a9be8">Z</text>
</svg></div>
<div id="tabs"><svg width="1263" height="18" viewBox="17 631 1263 18" style="left:0;top:0"><rect x="17.8" y="631.2" width="63.4" height="13" fill="#fbfbfb" stroke="#b4b4b4" stroke-width="0.8"/><line x1="33.4" y1="631.5" x2="33.4" y2="644" stroke="#b4b4b4" stroke-width="0.8"/><line x1="49.1" y1="631.5" x2="49.1" y2="644" stroke="#b4b4b4" stroke-width="0.8"/><line x1="64.7" y1="631.5" x2="64.7" y2="644" stroke="#b4b4b4" stroke-width="0.8"/><path d="M22 634.5v7" stroke="#000" stroke-width="1.3"/><path d="M27.5 634.3v7.4l-4.3-3.7z" fill="#000"/><path d="M43.3 634.3v7.4l-4.3-3.7z" fill="#000"/><path d="M54 634.3v7.4l4.3-3.7z" fill="#000"/><path d="M70 634.3v7.4l4.3-3.7z" fill="#000"/><path d="M75.6 634.5v7" stroke="#000" stroke-width="1.3"/><path d="M84 631 L122.3 631 L118.5 644.3 L88.5 644.3 Z" fill="#0a0a0a"/><path d="M122.3 631 L119.5 644.3 L163.5 644.3 L166.5 631" fill="#f6f6f6" stroke="#222" stroke-width="0.9"/><path d="M166.5 631 L163.8 644.3 L206.5 644.3 L210.4 631" fill="#f6f6f6" stroke="#222" stroke-width="0.9"/><text x="91" y="641.3" font-family='"Liberation Sans",sans-serif' font-size="10.5" fill="#fff" textLength="24" lengthAdjust="spacingAndGlyphs">Model</text><text x="126.6" y="641.3" font-family='"Liberation Sans",sans-serif' font-size="10.5" fill="#222" textLength="32" lengthAdjust="spacingAndGlyphs">Layout1</text><text x="169.7" y="641.3" font-family='"Liberation Sans",sans-serif' font-size="10.5" fill="#222" textLength="33" lengthAdjust="spacingAndGlyphs">Layout2</text><rect x="17" y="645.5" width="1263" height="3.8" fill="#fafafa"/></svg></div>
<div id="cmd"><div style="left:0;top:0;width:1280px;height:11.4px;background:#f0f0f0;border-top:2px solid #9a9a9a;border-bottom:2.1px solid #767676"></div><span style="left:-14px;top:12px">Command: *Cancel*</span><div style="left:0;top:30px;width:1280px;height:1px;background:#cfcfcf"></div><span style="left:-14px;top:33.5px">Command: </span><div style="left:49.4px;top:32.5px;width:1.6px;height:13px;background:#000"></div><div style="left:1230px;top:31px;width:50px;height:18px;background:#f0f0f0"></div><div style="left:1245.5px;top:32.5px;width:14px;height:13.5px;background:#cdcdcd"></div><svg width="50" height="18" style="left:1230px;top:31px"><path d="M10 4.5 L6.5 8 L10 11.5" fill="none" stroke="#333" stroke-width="1.4"/><path d="M47 4.5 L50.5 8 L47 11.5" fill="none" stroke="#333" stroke-width="1.4"/></svg></div>
<div id="status"><span style="left:-20px;top:2.5px;width:138px;height:17.5px;border:1px solid #8a8a8a;border-right-color:#fff;text-align:right;padding-right:22.5px;line-height:15.5px"><i style="transform-origin:right center;transform:scaleX(0.95)">409, 311.7344, 0.0000</i></span><span class="off" style="left:121.5px;width:29.19999999999999px"><i>SNAP</i></span><span class="off" style="left:153px;width:30px"><i>GRID</i></span><span class="on" style="left:185px;width:38px"><i>ORTHO</i></span><span class="off" style="left:226px;width:36px"><i>POLAR</i></span><span class="on" style="left:264.7px;width:36.80000000000001px"><i>OSNAP</i></span><span class="on" style="left:304.5px;width:41.5px"><i>OTRACK</i></span><span class="on" style="left:349.5px;width:29.5px"><i>DUCS</i></span><span class="on" style="left:381.7px;width:24.80000000000001px"><i>DYN</i></span><span class="off" style="left:409px;width:25px"><i>LWT</i></span><span class="on" style="left:436.9px;width:36.60000000000002px"><i>MODEL</i></span><div style="left:1235px;top:3px;width:37px;height:17px;border:1px solid #c8c8c8;border-left-color:#9a9a9a;border-top-color:#9a9a9a"></div><svg width="40" height="18" style="left:1236px;top:2px" viewBox="1236 702 40 18"><path d="M1241 705 l6 9 M1246 704 l-5 11" stroke="#3a5a9a" stroke-width="1.6" fill="none"/><path d="M1244 717 l4.5 -8 l4.5 8z" fill="#f4d020" stroke="#4a4a20" stroke-width="0.7"/><rect x="1258" y="710.5" width="9.5" height="7.5" fill="#d8b820" stroke="#6a5a10" stroke-width="0.8"/><path d="M1262 710.5 v-2.5 a3.2 3.2 0 0 1 6.4 0 v1" fill="none" stroke="#b89a18" stroke-width="1.6"/></svg></div>
</body></html>
